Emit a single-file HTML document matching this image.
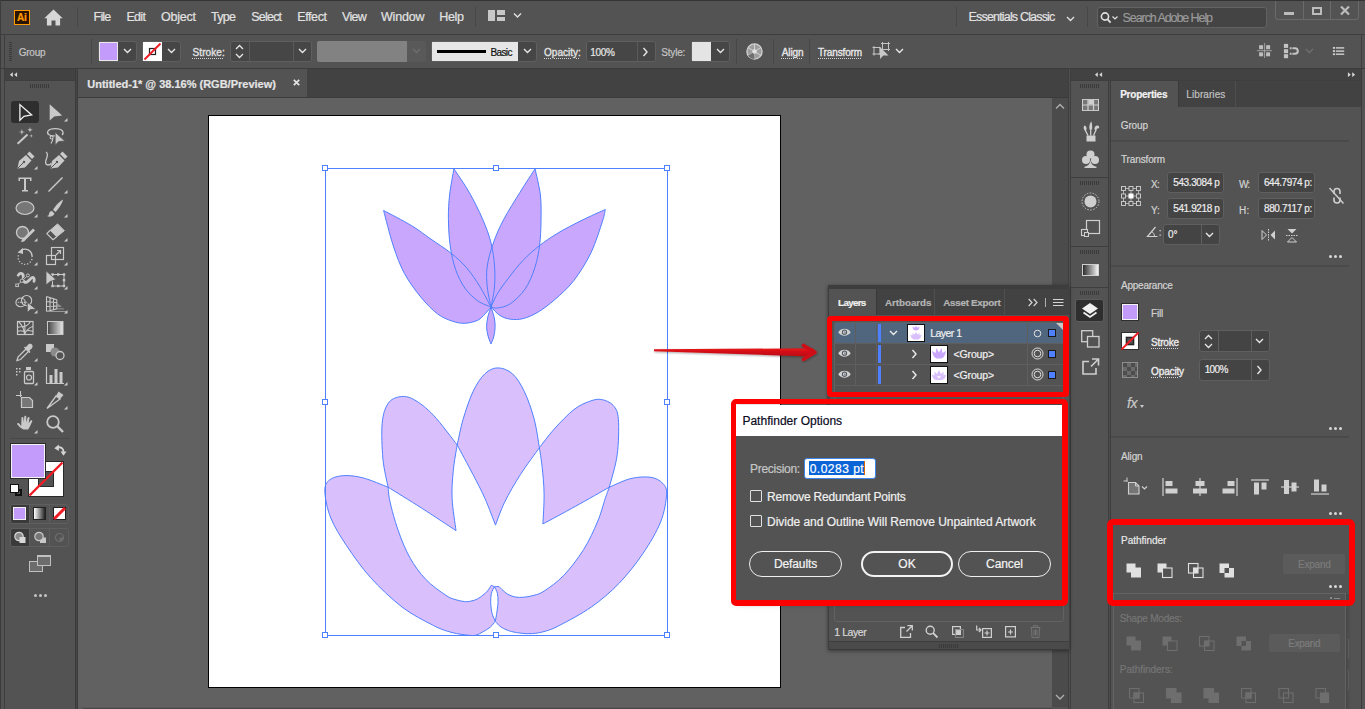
<!DOCTYPE html>
<html><head><meta charset="utf-8">
<style>
*{box-sizing:border-box;margin:0;padding:0}
html,body{width:1365px;height:709px;overflow:hidden;background:#535353}
body{font-family:"Liberation Sans",sans-serif;font-size:11px;color:#dcdcdc;position:relative}
.a{position:absolute}
.t{position:absolute;white-space:nowrap;line-height:1;-webkit-text-stroke:0.2px currentColor}
.mb{font-size:12.5px;color:#e2e2e2;top:11px;letter-spacing:-0.1px}
.box{position:absolute;background:#464646;border:1px solid #5f5f5f;border-radius:3px}
.sep{position:absolute;width:1px;background:#444}
.grip{position:absolute;height:5px;background:repeating-linear-gradient(90deg,#3a3a3a 0 1px,transparent 1px 2px)}
.dot{text-decoration:underline dotted;text-decoration-thickness:1px;text-underline-offset:1.5px;text-decoration-color:#d4d4d4}
.bd{-webkit-text-stroke:0.35px currentColor}
svg{position:absolute;overflow:visible}
</style></head><body>

<!-- ===== window edges ===== -->
<div class="a" style="left:0;top:0;width:1365px;height:1px;background:#343434"></div>
<div class="a" style="left:0;top:0;width:1px;height:709px;background:#3c3c3c"></div>

<!-- ===== MENU BAR ===== -->
<div id="menubar" class="a" style="left:1px;top:1px;width:1364px;height:33px;background:#535353"></div>
<!-- Ai logo -->
<div class="a" style="left:14px;top:10px;width:16px;height:15px;background:#2b1400;border:1px solid #ff9a00"></div>
<div class="t" style="left:17px;top:13px;font-size:10px;font-weight:bold;color:#ff9a00;letter-spacing:-0.2px">Ai</div>
<!-- home -->
<svg style="left:44px;top:9px" width="19" height="17" viewBox="0 0 19 17"><path d="M9.5 0.5L0.3 9.2h2.6v7.3h4.6v-5h4v5h4.6V9.2h2.6z" fill="#d6d6d6"/></svg>
<div class="sep" style="left:77px;top:7px;height:20px;background:#474747"></div>
<div class="t mb" style="left:93.6px;letter-spacing:-0.82px;">File</div>
<div class="t mb" style="left:126.4px;letter-spacing:-0.68px;">Edit</div>
<div class="t mb" style="left:161.0px;letter-spacing:-0.25px;">Object</div>
<div class="t mb" style="left:211.0px;letter-spacing:-0.74px;">Type</div>
<div class="t mb" style="left:251.3px;letter-spacing:-0.79px;">Select</div>
<div class="t mb" style="left:297.3px;letter-spacing:-0.41px;">Effect</div>
<div class="t mb" style="left:342.1px;letter-spacing:-0.76px;">View</div>
<div class="t mb" style="left:381.0px;letter-spacing:-0.21px;">Window</div>
<div class="t mb" style="left:439.3px;letter-spacing:-0.37px;">Help</div>
<div class="sep" style="left:475px;top:7px;height:20px;background:#474747"></div>
<!-- workspace layout icon -->
<svg style="left:488px;top:10px" width="36" height="12" viewBox="0 0 36 12"><rect x="0" y="0" width="7" height="11" fill="#c8c8c8"/><rect x="9" y="0" width="8" height="5" fill="#c8c8c8"/><rect x="9" y="7" width="8" height="4" fill="#c8c8c8"/><path d="M26 3.5l3.5 3.5 3.5-3.5" fill="none" stroke="#e0e0e0" stroke-width="1.4"/></svg>
<!-- right side -->
<div class="sep" style="left:956px;top:7px;height:20px;background:#474747"></div>
<div class="t" style="left:968.5px;top:11px;font-size:12.5px;color:#e2e2e2;letter-spacing:-0.82px;">Essentials Classic</div>
<svg style="left:1066px;top:16px" width="9" height="6" viewBox="0 0 9 6"><path d="M1 1l3.5 3.5L8 1" fill="none" stroke="#e0e0e0" stroke-width="1.4"/></svg>
<div class="sep" style="left:1087px;top:7px;height:20px;background:#474747"></div>
<div class="a" style="left:1097px;top:7px;width:170px;height:21px;background:#444;border:1px solid #626262;border-radius:3px"></div>
<svg style="left:1100px;top:11px" width="20" height="14" viewBox="0 0 20 14"><circle cx="5" cy="5.5" r="3.6" fill="none" stroke="#e0e0e0" stroke-width="1.6"/><path d="M7.6 8.4l3 3.2" stroke="#e0e0e0" stroke-width="1.8"/><path d="M12.5 5.5l2.5 2.5 2.5-2.5" fill="none" stroke="#e0e0e0" stroke-width="1.2"/></svg>
<div class="t" style="left:1122.6px;top:12px;font-size:12.5px;color:#9a9a9a;letter-spacing:-1.08px;">Search Adobe Help</div>
<!-- window controls -->
<div class="a" style="left:1275px;top:1px;width:84px;height:19px;border:1px solid #6a6a6a;border-top:none;border-radius:0 0 3px 3px"></div>
<div class="sep" style="left:1303px;top:1px;height:18px;background:#6a6a6a"></div>
<div class="sep" style="left:1330px;top:1px;height:18px;background:#6a6a6a"></div>
<div class="a" style="left:1284px;top:12px;width:10px;height:3px;background:#bcbcbc"></div>
<div class="a" style="left:1312px;top:7px;width:10px;height:8px;border:2px solid #bcbcbc"></div>
<svg style="left:1340px;top:6px" width="10" height="9" viewBox="0 0 10 9"><path d="M1 0.5l8 8M9 0.5l-8 8" stroke="#bcbcbc" stroke-width="2.2"/></svg>


<!-- ===== CONTROL BAR ===== -->
<div class="a" style="left:1px;top:34px;width:1364px;height:1px;background:#3e3e3e"></div>
<div class="a" style="left:4px;top:35px;width:1358px;height:33px;background:#535353;border-left:1px solid #3e3e3e;border-right:1px solid #3e3e3e"></div>
<div class="a" style="left:1px;top:68px;width:1364px;height:1px;background:#3c3c3c"></div>
<div class="grip" style="left:9px;top:42px;width:3px;height:19px;background:repeating-linear-gradient(180deg,#3a3a3a 0 1px,transparent 1px 2px)"></div>
<div class="t" style="left:18.7px;top:48px;font-size:10px;color:#c4c4c4;letter-spacing:-0.22px;">Group</div>
<div class="sep" style="left:91px;top:39px;height:25px;background:#474747"></div>
<!-- fill swatch -->
<div class="box" style="left:98px;top:41px;width:39px;height:21px"></div>
<div class="a" style="left:99px;top:42px;width:19px;height:19px;background:#c29bfb;border:1px solid #e8e8e8"></div>
<svg style="left:123px;top:48px" width="9" height="6" viewBox="0 0 9 6"><path d="M1 1l3.5 3.5L8 1" fill="none" stroke="#e6e6e6" stroke-width="1.4"/></svg>
<!-- stroke swatch -->
<div class="box" style="left:142px;top:41px;width:39px;height:21px"></div>
<div class="a" style="left:143px;top:42px;width:19px;height:19px;background:#fff"></div>
<svg style="left:143px;top:42px" width="19" height="19" viewBox="0 0 19 19"><rect x="6.5" y="6.5" width="6" height="6" fill="#fff" stroke="#222" stroke-width="1.2"/><path d="M1.5 17.5L17.5 1.5" stroke="#ee1c24" stroke-width="2"/></svg>
<svg style="left:167px;top:48px" width="9" height="6" viewBox="0 0 9 6"><path d="M1 1l3.5 3.5L8 1" fill="none" stroke="#e6e6e6" stroke-width="1.4"/></svg>
<div class="t" style="left:192.5px;top:48px;font-size:10px;color:#e0e0e0;letter-spacing:0.09px;"><span class="dot bd">Stroke:</span></div>
<!-- stroke weight -->
<div class="box" style="left:230px;top:41px;width:82px;height:21px"></div>
<div class="sep" style="left:249px;top:42px;height:19px;background:#5a5a5a"></div>
<div class="sep" style="left:293px;top:42px;height:19px;background:#5a5a5a"></div>
<svg style="left:235px;top:44px" width="9" height="15" viewBox="0 0 9 15"><path d="M1 5l3.5-3.5L8 5M1 10l3.5 3.5L8 10" fill="none" stroke="#e6e6e6" stroke-width="1.3"/></svg>
<svg style="left:298px;top:48px" width="9" height="6" viewBox="0 0 9 6"><path d="M1 1l3.5 3.5L8 1" fill="none" stroke="#e6e6e6" stroke-width="1.4"/></svg>
<!-- var width (disabled) -->
<div class="a" style="left:317px;top:41px;width:90px;height:21px;background:#828282;border-radius:2px 0 0 2px"></div>
<div class="a" style="left:407px;top:41px;width:19px;height:21px;background:#595959;border-radius:0 2px 2px 0"></div>
<svg style="left:412px;top:48px" width="9" height="6" viewBox="0 0 9 6"><path d="M1 1l3.5 3.5L8 1" fill="none" stroke="#6e6e6e" stroke-width="1.4"/></svg>
<!-- brush -->
<div class="box" style="left:431px;top:41px;width:106px;height:21px"></div>
<div class="a" style="left:432px;top:42px;width:86px;height:19px;background:#e6e6e6"></div>
<div class="a" style="left:437px;top:50px;width:49px;height:3px;background:#000"></div>
<div class="t" style="left:490.4px;top:48px;font-size:10px;color:#111;letter-spacing:-0.59px;">Basic</div>
<svg style="left:523px;top:48px" width="9" height="6" viewBox="0 0 9 6"><path d="M1 1l3.5 3.5L8 1" fill="none" stroke="#e6e6e6" stroke-width="1.4"/></svg>
<!-- opacity -->
<div class="t" style="left:544.0px;top:48px;font-size:10px;color:#e0e0e0;letter-spacing:0.02px;"><span class="dot bd">Opacity:</span></div>
<div class="box" style="left:586px;top:41px;width:70px;height:21px"></div>
<div class="sep" style="left:637px;top:42px;height:19px;background:#5a5a5a"></div>
<div class="t" style="left:590.3px;top:48px;font-size:10px;color:#e6e6e6;letter-spacing:-0.36px;">100%</div>
<svg style="left:642px;top:47px" width="7" height="10" viewBox="0 0 7 10"><path d="M1.5 1l3.5 4-3.5 4" fill="none" stroke="#e6e6e6" stroke-width="1.4"/></svg>
<div class="t" style="left:661.2px;top:48px;font-size:10px;color:#c4c4c4;letter-spacing:-0.16px;">Style:</div>
<div class="box" style="left:691px;top:41px;width:39px;height:21px"></div>
<div class="a" style="left:692px;top:42px;width:19px;height:19px;background:#e4e4e4"></div>
<svg style="left:716px;top:48px" width="9" height="6" viewBox="0 0 9 6"><path d="M1 1l3.5 3.5L8 1" fill="none" stroke="#e6e6e6" stroke-width="1.4"/></svg>
<div class="sep" style="left:736px;top:39px;height:25px;background:#474747"></div>
<!-- recolor -->
<svg style="left:746px;top:43px" width="17" height="17" viewBox="0 0 17 17"><circle cx="8.5" cy="8.5" r="7.6" fill="#9e9e9e" stroke="#d2d2d2" stroke-width="1.3"/><path d="M8.5 8.5L8.5 1M8.5 8.5L15 4.5M8.5 8.5L15 12.5M8.5 8.5V16M8.5 8.5L2 12.5M8.5 8.5L2 4.5" stroke="#d8d8d8" stroke-width="0.9"/><path d="M8.5 8.5L2 12.5A7.6 7.6 0 0 0 8.5 16z" fill="#707070"/><circle cx="8.5" cy="8.5" r="2.2" fill="#e2e2e2"/></svg>
<div class="sep" style="left:773px;top:39px;height:25px;background:#474747"></div>
<div class="t" style="left:781.8px;top:48px;font-size:10px;color:#e6e6e6;letter-spacing:-0.11px;"><span class="dot bd">Align</span></div>
<div class="sep" style="left:809px;top:39px;height:25px;background:#474747"></div>
<div class="t" style="left:818.0px;top:48px;font-size:10px;color:#e6e6e6;letter-spacing:-0.13px;"><span class="dot bd">Transform</span></div>
<!-- isolate icon -->
<svg style="left:873px;top:42px" width="32" height="19" viewBox="0 0 32 19"><g fill="none" stroke="#c4c4c4" stroke-width="1"><rect x="1" y="5.5" width="6" height="6.5"/><path d="M-0.5 5.5h2M-0.5 12h2M5.5 12h2.5M1 4v2M1 11.5v2"/><rect x="9.5" y="1.5" width="6" height="6"/><path d="M8 1.5h2M15 1.5h2M15 7.5h2M9.5 0v2M15.5 0v2M15.5 7v2M9.5 7v2"/></g><path d="M6.5 4.5L7.2 17L10.2 13.5L15.5 13.5Z" fill="#c8c8c8"/><path d="M23 7l3.5 3.5L30 7" fill="none" stroke="#e6e6e6" stroke-width="1.4"/></svg>
<!-- right icons -->
<svg style="left:1256px;top:42px" width="17" height="17" viewBox="0 0 17 17"><g fill="#bdbdbd"><rect x="3.1" y="3.2" width="4" height="4"/><rect x="10.1" y="3.2" width="4" height="4"/><rect x="3.1" y="10.3" width="4" height="4"/><rect x="10.1" y="10.3" width="4" height="4"/></g><path d="M8.6 1v15M0.9 8.7h15" stroke="#a8a8a8" stroke-width="0.9"/></svg>
<svg style="left:1283px;top:42px" width="32" height="17" viewBox="0 0 32 17"><g fill="#c4c4c4"><rect x="0.9" y="1.9" width="4.2" height="4"/><rect x="0.9" y="7.2" width="4.2" height="4"/><rect x="0.9" y="12.2" width="4.2" height="4"/></g><path d="M6.8 6.2h5.2a2.8 2.8 0 0 1 0 5.6h-5.2" fill="none" stroke="#c4c4c4" stroke-width="2"/><path d="M9 4.5v9" stroke="#535353" stroke-width="0.8"/><path d="M22.7 6.9l3.7 3.7 3.7-3.7" fill="none" stroke="#727272" stroke-width="1.2"/></svg>
<svg style="left:1332px;top:46px" width="13" height="10" viewBox="0 0 13 10"><g fill="#d0d0d0"><rect x="0.9" y="1" width="2.2" height="1.8"/><rect x="0.9" y="4.2" width="2.2" height="1.8"/><rect x="0.9" y="7.300" width="2.2" height="1.8"/><rect x="4" y="1.2" width="8.2" height="1.400"/><rect x="4" y="4.400" width="8.2" height="1.400"/><rect x="4" y="7.5" width="8.2" height="1.400"/></g></svg>


<!-- ===== TAB BAR + CANVAS ===== -->
<div class="a" style="left:78px;top:69px;width:991px;height:28px;background:#424242"></div>
<div class="a" style="left:78px;top:69px;width:229px;height:28px;background:#535353"></div>
<div class="a" style="left:78px;top:97px;width:991px;height:1px;background:#3b3b3b"></div>
<div id="canvas" class="a" style="left:78px;top:98px;width:974px;height:609px;background:#616161"></div>
<div class="a" style="left:1052px;top:98px;width:16px;height:609px;background:#4b4b4b"></div>
<div class="a" style="left:1068px;top:69px;width:1px;height:640px;background:#3e3e3e"></div><div class="a" style="left:1069px;top:69px;width:1px;height:640px;background:#505050"></div><div class="a" style="left:1070px;top:69px;width:1px;height:640px;background:#3e3e3e"></div>
<div class="a" style="left:75px;top:69px;width:3px;height:640px;background:#3b3b3b"></div><div class="a" style="left:76px;top:69px;width:1px;height:640px;background:#464646"></div>
<div class="a" style="left:208px;top:115px;width:573px;height:573px;background:#fff;border:1px solid #000"></div>
<svg class="a" style="left:0;top:0" width="1365" height="709" viewBox="0 0 1365 709">
<g fill="#c9a7fc" stroke="none"><path d="M453.9 168.8C453.2 173.2 450.5 186.8 449.6 195.0C448.7 203.2 448.3 209.8 448.4 218.3C448.5 226.8 449.0 237.3 450.2 245.9C451.4 254.5 453.2 262.7 455.7 269.7C458.1 276.7 461.2 282.9 464.9 288.1C468.6 293.3 473.4 297.8 477.8 300.9C482.2 304.0 488.8 306.0 491.0 307.0C491.6 303.8 493.8 294.6 494.4 288.0C495.0 281.4 495.1 274.7 494.6 267.2C494.1 259.7 493.1 251.1 491.1 243.1C489.1 235.0 486.2 227.4 482.5 218.9C478.9 210.5 473.9 200.5 469.1 192.2C464.4 183.8 456.4 172.7 453.9 168.8Z"/><path d="M535.1 168.8C535.9 173.2 539.4 186.3 540.4 195.0C541.4 203.7 541.1 212.6 541.0 221.0C540.9 229.4 540.6 237.7 539.6 245.5C538.6 253.3 537.2 260.6 534.8 267.8C532.4 275.0 529.3 282.9 525.2 288.9C521.1 294.9 515.0 300.5 510.4 303.7C505.8 306.9 500.9 307.4 497.7 308.0C494.5 308.6 492.1 307.2 491.0 307.0C490.4 303.8 488.1 294.6 487.4 288.0C486.7 281.4 486.1 274.7 487.1 267.2C488.1 259.7 490.4 251.1 493.3 243.1C496.1 235.0 499.5 227.4 504.0 218.9C508.4 210.5 514.9 200.5 520.1 192.2C525.2 183.8 532.6 172.7 535.1 168.8Z"/><path d="M383.6 210.5C388.3 213.0 404.0 221.0 411.7 225.7C419.4 230.4 423.4 233.9 430.0 238.5C436.6 243.1 445.0 248.3 451.1 253.2C457.2 258.1 461.9 262.4 466.7 267.9C471.4 273.4 475.6 279.7 479.6 286.2C483.7 292.7 489.1 303.5 491.0 307.0C490.0 308.1 487.3 311.6 485.1 313.8C482.9 316.0 481.2 318.6 477.8 320.2C474.4 321.8 469.2 323.1 464.9 323.3C460.6 323.5 456.7 322.7 452.1 321.1C447.5 319.5 442.6 317.8 437.4 313.8C432.2 309.8 426.4 303.9 420.9 297.2C415.4 290.5 409.0 281.9 404.4 273.4C399.8 264.8 396.8 256.4 393.3 245.9C389.8 235.4 385.2 216.4 383.6 210.5Z"/><path d="M605.3 209.5C602.2 210.9 592.5 215.2 586.6 218.0C580.7 220.8 575.0 223.7 569.7 226.5C564.4 229.3 559.9 231.7 554.9 234.9C549.9 238.1 544.9 241.3 539.6 245.5C534.3 249.7 528.3 254.8 523.1 260.3C517.9 265.8 512.5 272.8 508.3 278.3C504.1 283.8 500.6 288.4 497.7 293.2C494.8 298.0 492.1 304.7 491.0 307.0C492.5 308.4 496.6 313.4 499.8 315.4C503.0 317.4 506.5 318.7 510.4 319.2C514.3 319.7 518.5 319.8 523.1 318.6C527.7 317.4 532.6 315.4 537.9 312.2C543.2 309.0 548.9 304.8 554.9 299.5C560.9 294.2 567.9 288.3 573.9 280.5C579.9 272.7 586.1 262.8 590.9 252.9C595.7 243.0 600.1 228.4 602.5 221.2C604.9 214.0 604.8 211.4 605.3 209.5Z"/><path d="M491.0 307.0C490.4 308.8 488.3 314.6 487.6 318.0C486.9 321.4 486.5 324.4 486.6 327.5C486.7 330.6 487.6 334.1 488.3 336.9C489.0 339.6 490.6 342.8 491.0 344.0C491.4 342.8 493.0 339.6 493.7 336.9C494.4 334.1 495.0 330.6 495.1 327.5C495.2 324.4 495.0 321.4 494.3 318.0C493.6 314.6 491.6 308.8 491.0 307.0Z"/></g>
<g fill="#d9c0fc" stroke="none"><path d="M457.2 444.9C458.2 440.7 460.5 428.1 463.1 419.3C465.8 410.4 469.4 399.2 473.0 391.6C476.6 384.0 480.7 377.8 484.9 373.8C489.0 369.9 493.3 367.9 497.9 367.9C502.5 367.9 508.1 369.9 512.5 373.8C516.9 377.8 520.7 384.0 524.4 391.6C528.0 399.2 531.7 409.9 534.2 419.3C536.7 428.6 538.5 443.0 539.4 447.7C536.2 452.2 526.2 465.5 520.4 474.6C514.6 483.6 508.8 493.8 504.6 502.2C500.5 510.6 497.0 521.3 495.5 525.1C493.7 520.6 488.6 506.7 484.9 498.3C481.1 489.8 477.6 483.4 473.0 474.6C468.4 465.7 459.8 449.9 457.2 444.9Z"/><path d="M457.2 444.9C453.3 440.0 440.7 422.9 433.5 415.3C426.3 407.7 419.4 402.6 413.8 399.5C408.2 396.4 404.2 396.1 399.9 396.7C395.7 397.4 391.0 399.0 388.1 403.5C385.1 407.9 383.0 414.0 382.2 423.2C381.3 432.4 382.0 448.1 382.9 458.8C383.9 469.4 387.2 482.5 388.1 487.2C393.7 490.7 410.3 500.9 421.7 508.1C433.0 515.4 450.3 526.9 456.0 530.6C455.4 525.3 452.5 508.3 452.1 498.3C451.6 488.3 452.4 479.5 453.3 470.6C454.1 461.7 456.5 449.2 457.2 444.9Z"/><path d="M539.4 447.7C541.8 444.6 548.4 435.5 554.2 429.1C560.0 422.7 568.1 414.1 574.0 409.5C579.9 404.9 585.1 403.0 589.7 401.3C594.3 399.6 597.5 398.8 601.4 399.5C605.3 400.2 610.4 402.1 613.2 405.4C616.1 408.7 617.7 411.0 618.4 419.3C619.0 427.5 618.7 443.5 617.2 454.8C615.7 466.1 610.6 481.8 609.3 487.2C603.7 490.4 586.8 500.0 575.7 506.2C564.7 512.3 548.4 521.0 542.9 523.9C543.1 519.0 544.2 503.9 544.1 494.3C544.0 484.8 542.9 474.4 542.1 466.7C541.3 458.9 539.8 450.9 539.4 447.7Z"/><path d="M388.1 487.2C383.8 485.6 370.0 479.6 362.4 477.7C354.8 475.8 348.2 475.3 342.7 475.7C337.1 476.2 331.8 477.7 328.8 480.5C325.9 483.2 324.5 486.1 324.9 492.3C325.2 498.6 327.2 509.1 330.8 518.0C334.4 526.9 340.0 535.8 346.6 545.7C353.2 555.5 361.1 567.1 370.3 577.3C379.5 587.5 391.4 598.8 401.9 606.9C412.4 614.9 425.2 621.2 433.5 625.5C441.8 629.8 446.1 630.9 452.0 632.5C457.9 634.1 464.9 634.9 469.0 635.3C473.1 635.7 474.2 635.6 476.5 635.0C478.8 634.4 480.6 633.1 482.9 631.8C485.2 630.5 488.1 629.0 490.2 627.2C492.3 625.5 494.4 622.3 495.3 621.3C494.8 620.0 492.9 616.6 492.1 613.5C491.3 610.4 490.8 605.9 490.7 602.5C490.6 599.1 490.8 595.9 491.4 593.3C492.0 590.7 493.9 587.8 494.4 586.7C493.9 586.5 491.7 585.5 491.2 585.3C490.6 586.2 488.9 589.4 487.5 591.0C486.1 592.6 484.6 593.9 482.9 595.2C481.2 596.5 479.4 598.0 477.4 599.0C475.4 600.0 473.1 600.7 471.0 601.1C468.9 601.5 467.3 601.9 464.6 601.6C461.9 601.3 458.2 600.6 455.0 599.5C451.8 598.4 450.3 598.4 445.4 595.0C440.5 591.7 431.5 585.5 425.6 579.2C419.7 573.0 414.4 565.7 409.8 557.5C405.2 549.3 401.2 539.1 398.0 529.9C394.7 520.6 391.7 509.3 390.1 502.2C388.4 495.1 388.4 489.7 388.1 487.2Z"/><path d="M609.3 487.2C612.9 485.7 624.1 480.2 631.0 478.5C637.9 476.9 645.5 476.5 650.8 477.3C656.0 478.1 660.0 480.4 662.6 483.2C665.3 486.1 666.9 487.9 666.6 494.3C666.2 500.8 664.6 512.1 660.6 522.0C656.7 531.8 649.8 543.4 642.9 553.6C636.0 563.8 627.7 574.3 619.2 583.2C610.6 592.1 601.4 599.9 591.5 606.9C581.6 613.9 567.7 621.1 559.9 625.2C552.1 629.3 549.6 629.9 545.0 631.3C540.4 632.7 536.1 633.3 532.3 633.6C528.5 633.9 525.5 633.6 522.0 633.3C518.5 632.9 514.8 632.5 511.3 631.5C507.8 630.5 503.9 628.9 501.2 627.2C498.5 625.5 496.3 622.3 495.3 621.3C495.5 620.0 496.2 616.6 496.7 613.5C497.1 610.4 497.9 605.9 498.0 602.5C498.1 599.1 498.0 595.9 497.4 593.3C496.8 590.7 494.9 587.8 494.4 586.7C495.2 586.7 498.2 586.5 499.0 586.5C499.7 587.2 501.7 589.3 503.1 590.6C504.6 591.9 505.7 593.1 507.7 594.2C509.7 595.3 512.2 596.5 515.0 597.0C517.8 597.5 521.0 597.5 524.2 597.2C527.4 596.9 530.7 596.3 534.0 595.3C537.3 594.3 539.1 594.4 544.1 591.1C549.1 587.8 557.3 582.2 563.9 575.3C570.4 568.4 578.0 558.5 583.6 549.6C589.2 540.7 593.8 530.5 597.4 522.0C601.1 513.4 603.4 504.1 605.3 498.3C607.3 492.5 608.6 489.0 609.3 487.2Z"/></g>
<g fill="none" stroke="#4f80ff" stroke-width="1" stroke-linejoin="round"><path d="M453.9 168.8C453.2 173.2 450.5 186.8 449.6 195.0C448.7 203.2 448.3 209.8 448.4 218.3C448.5 226.8 449.0 237.3 450.2 245.9C451.4 254.5 453.2 262.7 455.7 269.7C458.1 276.7 461.2 282.9 464.9 288.1C468.6 293.3 473.4 297.8 477.8 300.9C482.2 304.0 488.8 306.0 491.0 307.0C491.6 303.8 493.8 294.6 494.4 288.0C495.0 281.4 495.1 274.7 494.6 267.2C494.1 259.7 493.1 251.1 491.1 243.1C489.1 235.0 486.2 227.4 482.5 218.9C478.9 210.5 473.9 200.5 469.1 192.2C464.4 183.8 456.4 172.7 453.9 168.8Z"/><path d="M535.1 168.8C535.9 173.2 539.4 186.3 540.4 195.0C541.4 203.7 541.1 212.6 541.0 221.0C540.9 229.4 540.6 237.7 539.6 245.5C538.6 253.3 537.2 260.6 534.8 267.8C532.4 275.0 529.3 282.9 525.2 288.9C521.1 294.9 515.0 300.5 510.4 303.7C505.8 306.9 500.9 307.4 497.7 308.0C494.5 308.6 492.1 307.2 491.0 307.0C490.4 303.8 488.1 294.6 487.4 288.0C486.7 281.4 486.1 274.7 487.1 267.2C488.1 259.7 490.4 251.1 493.3 243.1C496.1 235.0 499.5 227.4 504.0 218.9C508.4 210.5 514.9 200.5 520.1 192.2C525.2 183.8 532.6 172.7 535.1 168.8Z"/><path d="M383.6 210.5C388.3 213.0 404.0 221.0 411.7 225.7C419.4 230.4 423.4 233.9 430.0 238.5C436.6 243.1 445.0 248.3 451.1 253.2C457.2 258.1 461.9 262.4 466.7 267.9C471.4 273.4 475.6 279.7 479.6 286.2C483.7 292.7 489.1 303.5 491.0 307.0C490.0 308.1 487.3 311.6 485.1 313.8C482.9 316.0 481.2 318.6 477.8 320.2C474.4 321.8 469.2 323.1 464.9 323.3C460.6 323.5 456.7 322.7 452.1 321.1C447.5 319.5 442.6 317.8 437.4 313.8C432.2 309.8 426.4 303.9 420.9 297.2C415.4 290.5 409.0 281.9 404.4 273.4C399.8 264.8 396.8 256.4 393.3 245.9C389.8 235.4 385.2 216.4 383.6 210.5Z"/><path d="M605.3 209.5C602.2 210.9 592.5 215.2 586.6 218.0C580.7 220.8 575.0 223.7 569.7 226.5C564.4 229.3 559.9 231.7 554.9 234.9C549.9 238.1 544.9 241.3 539.6 245.5C534.3 249.7 528.3 254.8 523.1 260.3C517.9 265.8 512.5 272.8 508.3 278.3C504.1 283.8 500.6 288.4 497.7 293.2C494.8 298.0 492.1 304.7 491.0 307.0C492.5 308.4 496.6 313.4 499.8 315.4C503.0 317.4 506.5 318.7 510.4 319.2C514.3 319.7 518.5 319.8 523.1 318.6C527.7 317.4 532.6 315.4 537.9 312.2C543.2 309.0 548.9 304.8 554.9 299.5C560.9 294.2 567.9 288.3 573.9 280.5C579.9 272.7 586.1 262.8 590.9 252.9C595.7 243.0 600.1 228.4 602.5 221.2C604.9 214.0 604.8 211.4 605.3 209.5Z"/><path d="M491.0 307.0C490.4 308.8 488.3 314.6 487.6 318.0C486.9 321.4 486.5 324.4 486.6 327.5C486.7 330.6 487.6 334.1 488.3 336.9C489.0 339.6 490.6 342.8 491.0 344.0C491.4 342.8 493.0 339.6 493.7 336.9C494.4 334.1 495.0 330.6 495.1 327.5C495.2 324.4 495.0 321.4 494.3 318.0C493.6 314.6 491.6 308.8 491.0 307.0Z"/><path d="M457.2 444.9C458.2 440.7 460.5 428.1 463.1 419.3C465.8 410.4 469.4 399.2 473.0 391.6C476.6 384.0 480.7 377.8 484.9 373.8C489.0 369.9 493.3 367.9 497.9 367.9C502.5 367.9 508.1 369.9 512.5 373.8C516.9 377.8 520.7 384.0 524.4 391.6C528.0 399.2 531.7 409.9 534.2 419.3C536.7 428.6 538.5 443.0 539.4 447.7C536.2 452.2 526.2 465.5 520.4 474.6C514.6 483.6 508.8 493.8 504.6 502.2C500.5 510.6 497.0 521.3 495.5 525.1C493.7 520.6 488.6 506.7 484.9 498.3C481.1 489.8 477.6 483.4 473.0 474.6C468.4 465.7 459.8 449.9 457.2 444.9Z"/><path d="M457.2 444.9C453.3 440.0 440.7 422.9 433.5 415.3C426.3 407.7 419.4 402.6 413.8 399.5C408.2 396.4 404.2 396.1 399.9 396.7C395.7 397.4 391.0 399.0 388.1 403.5C385.1 407.9 383.0 414.0 382.2 423.2C381.3 432.4 382.0 448.1 382.9 458.8C383.9 469.4 387.2 482.5 388.1 487.2C393.7 490.7 410.3 500.9 421.7 508.1C433.0 515.4 450.3 526.9 456.0 530.6C455.4 525.3 452.5 508.3 452.1 498.3C451.6 488.3 452.4 479.5 453.3 470.6C454.1 461.7 456.5 449.2 457.2 444.9Z"/><path d="M539.4 447.7C541.8 444.6 548.4 435.5 554.2 429.1C560.0 422.7 568.1 414.1 574.0 409.5C579.9 404.9 585.1 403.0 589.7 401.3C594.3 399.6 597.5 398.8 601.4 399.5C605.3 400.2 610.4 402.1 613.2 405.4C616.1 408.7 617.7 411.0 618.4 419.3C619.0 427.5 618.7 443.5 617.2 454.8C615.7 466.1 610.6 481.8 609.3 487.2C603.7 490.4 586.8 500.0 575.7 506.2C564.7 512.3 548.4 521.0 542.9 523.9C543.1 519.0 544.2 503.9 544.1 494.3C544.0 484.8 542.9 474.4 542.1 466.7C541.3 458.9 539.8 450.9 539.4 447.7Z"/><path d="M388.1 487.2C383.8 485.6 370.0 479.6 362.4 477.7C354.8 475.8 348.2 475.3 342.7 475.7C337.1 476.2 331.8 477.7 328.8 480.5C325.9 483.2 324.5 486.1 324.9 492.3C325.2 498.6 327.2 509.1 330.8 518.0C334.4 526.9 340.0 535.8 346.6 545.7C353.2 555.5 361.1 567.1 370.3 577.3C379.5 587.5 391.4 598.8 401.9 606.9C412.4 614.9 425.2 621.2 433.5 625.5C441.8 629.8 446.1 630.9 452.0 632.5C457.9 634.1 464.9 634.9 469.0 635.3C473.1 635.7 474.2 635.6 476.5 635.0C478.8 634.4 480.6 633.1 482.9 631.8C485.2 630.5 488.1 629.0 490.2 627.2C492.3 625.5 494.4 622.3 495.3 621.3C494.8 620.0 492.9 616.6 492.1 613.5C491.3 610.4 490.8 605.9 490.7 602.5C490.6 599.1 490.8 595.9 491.4 593.3C492.0 590.7 493.9 587.8 494.4 586.7C493.9 586.5 491.7 585.5 491.2 585.3C490.6 586.2 488.9 589.4 487.5 591.0C486.1 592.6 484.6 593.9 482.9 595.2C481.2 596.5 479.4 598.0 477.4 599.0C475.4 600.0 473.1 600.7 471.0 601.1C468.9 601.5 467.3 601.9 464.6 601.6C461.9 601.3 458.2 600.6 455.0 599.5C451.8 598.4 450.3 598.4 445.4 595.0C440.5 591.7 431.5 585.5 425.6 579.2C419.7 573.0 414.4 565.7 409.8 557.5C405.2 549.3 401.2 539.1 398.0 529.9C394.7 520.6 391.7 509.3 390.1 502.2C388.4 495.1 388.4 489.7 388.1 487.2Z"/><path d="M609.3 487.2C612.9 485.7 624.1 480.2 631.0 478.5C637.9 476.9 645.5 476.5 650.8 477.3C656.0 478.1 660.0 480.4 662.6 483.2C665.3 486.1 666.9 487.9 666.6 494.3C666.2 500.8 664.6 512.1 660.6 522.0C656.7 531.8 649.8 543.4 642.9 553.6C636.0 563.8 627.7 574.3 619.2 583.2C610.6 592.1 601.4 599.9 591.5 606.9C581.6 613.9 567.7 621.1 559.9 625.2C552.1 629.3 549.6 629.9 545.0 631.3C540.4 632.7 536.1 633.3 532.3 633.6C528.5 633.9 525.5 633.6 522.0 633.3C518.5 632.9 514.8 632.5 511.3 631.5C507.8 630.5 503.9 628.9 501.2 627.2C498.5 625.5 496.3 622.3 495.3 621.3C495.5 620.0 496.2 616.6 496.7 613.5C497.1 610.4 497.9 605.9 498.0 602.5C498.1 599.1 498.0 595.9 497.4 593.3C496.8 590.7 494.9 587.8 494.4 586.7C495.2 586.7 498.2 586.5 499.0 586.5C499.7 587.2 501.7 589.3 503.1 590.6C504.6 591.9 505.7 593.1 507.7 594.2C509.7 595.3 512.2 596.5 515.0 597.0C517.8 597.5 521.0 597.5 524.2 597.2C527.4 596.9 530.7 596.3 534.0 595.3C537.3 594.3 539.1 594.4 544.1 591.1C549.1 587.8 557.3 582.2 563.9 575.3C570.4 568.4 578.0 558.5 583.6 549.6C589.2 540.7 593.8 530.5 597.4 522.0C601.1 513.4 603.4 504.1 605.3 498.3C607.3 492.5 608.6 489.0 609.3 487.2Z"/></g>
<rect x="325.5" y="168.5" width="342" height="467" fill="none" stroke="#4f80ff" stroke-width="1"/>
<g fill="#fff" stroke="#4f80ff" stroke-width="1">
<rect x="322.5" y="165.5" width="5" height="5"/><rect x="493.5" y="165.5" width="5" height="5"/><rect x="664.5" y="165.5" width="5" height="5"/>
<rect x="322.5" y="399.5" width="5" height="5"/><rect x="664.5" y="399.5" width="5" height="5"/>
<rect x="322.5" y="632.5" width="5" height="5"/><rect x="493.5" y="632.5" width="5" height="5"/><rect x="664.5" y="632.5" width="5" height="5"/>
</g>
</svg>
<!-- scroll arrows -->
<svg class="a" style="left:1052px;top:98px" width="16" height="609" viewBox="0 0 16 609"><path d="M4 10.5l4-4 4 4M4 597l4 4 4-4" fill="none" stroke="#b0b0b0" stroke-width="1.3"/></svg>
<!-- TAB -->
<div class="t" style="left:87.3px;top:79px;font-size:11px;font-weight:bold;color:#e4e4e4;letter-spacing:-0.00px;">Untitled-1* @ 38.16% (RGB/Preview)</div>
<svg style="left:293px;top:79px" width="7" height="7" viewBox="0 0 7 7"><path d="M0.8 0.8l5.4 5.4M6.2 0.8L0.8 6.2" stroke="#e4e4e4" stroke-width="1.7"/></svg>

<!-- bottom strip --><div class="a" style="left:78px;top:707px;width:974px;height:1px;background:#5a5a5a"></div><div class="a" style="left:83px;top:708px;width:969px;height:1px;background:#474747"></div><div class="a" style="left:78px;top:708px;width:5px;height:1px;background:#5e5e5e"></div>

<!-- ===== LEFT TOOLBAR ===== -->
<div class="a" style="left:5px;top:69px;width:70px;height:11px;background:#424242"></div><div class="a" style="left:5px;top:80px;width:70px;height:1px;background:#3e3e3e"></div>
<div class="a" style="left:4px;top:69px;width:1px;height:640px;background:#3e3e3e"></div><div class="a" style="left:5px;top:81px;width:70px;height:628px;background:#535353"></div>
<svg class="a" style="left:9px;top:72px" width="9" height="5.4" viewBox="0 0 10 6"><path d="M4.2 0.3L1 3l3.2 2.7zM9 0.3L5.8 3L9 5.7z" fill="#dadada"/></svg>
<div class="grip" style="left:30px;top:84px;width:20px;height:4px"></div>
<div class="a" style="left:11px;top:101px;width:28px;height:22px;background:#2e2e2e;border-radius:3px"></div>
<svg style="left:13px;top:100px" width="24" height="24" viewBox="0 0 24 24"><path d="M6.9 4.6V20.2L10.9 16.3L18.6 14.9Z" fill="none" stroke="#f2f2f2" stroke-width="1.3" stroke-linejoin="miter"/></svg>
<svg style="left:43px;top:100px" width="24" height="24" viewBox="0 0 24 24"><path d="M6.7 4.2V20.6L11.2 16.4L19.2 15.5Z" fill="#c9c9c9"/><path d="M24.5 18V21.5H21Z" fill="#c9c9c9"/></svg>
<svg style="left:13px;top:124px" width="24" height="24" viewBox="0 0 24 24"><path d="M4.6 19.8L14.5 10.4" stroke="#c9c9c9" stroke-width="2"/><path d="M8.9 4.8L9.5 7.4L12.1 8.0L9.5 8.6L8.9 11.2L8.3 8.6L5.7 8.0L8.3 7.4ZM17.0 3.0L17.6 5.2L19.8 5.8L17.6 6.4L17.0 8.6L16.4 6.4L14.2 5.8L16.4 5.2ZM18.2 10.0L18.6 11.5L20.1 11.9L18.6 12.3L18.2 13.8L17.8 12.3L16.3 11.9L17.8 11.5Z" fill="#c9c9c9"/></svg>
<svg style="left:43px;top:124px" width="24" height="24" viewBox="0 0 24 24"><path d="M12 11.8C6 12.5 3.5 9.5 5 7C7 4 17 3.5 19.5 7C20.5 8.5 20 10 19 11" fill="none" stroke="#c9c9c9" stroke-width="1.3"/><circle cx="8.6" cy="13.5" r="1.5" fill="none" stroke="#c9c9c9" stroke-width="1.1"/><path d="M9.5 14.8C10.5 16.5 8.5 17.5 8 19.5" fill="none" stroke="#c9c9c9" stroke-width="1.2"/><path d="M12.2 8.3V21.2L15.6 17.6L21.8 17Z" fill="#c9c9c9" stroke="#535353" stroke-width="0.7"/></svg>
<svg style="left:13px;top:148px" width="24" height="24" viewBox="0 0 24 24"><path d="M4.5 20.5L6 13L13 7L18.5 12.5L12 19.5Z" fill="#c9c9c9"/><path d="M5 20L10.5 14.5" stroke="#535353" stroke-width="1"/><circle cx="11" cy="14" r="1.2" fill="#535353"/><path d="M14 6L16.5 3.5L21.5 8.5L19 11Z" fill="#c9c9c9"/><path d="M24.5 18V21.5H21Z" fill="#c9c9c9"/></svg>
<svg style="left:43px;top:148px" width="24" height="24" viewBox="0 0 24 24"><g transform="translate(3,0)"><path d="M4.5 20.5L6 13L13 7L18.5 12.5L12 19.5Z" fill="#c9c9c9"/><path d="M5 20L10.5 14.5" stroke="#535353" stroke-width="1"/><circle cx="11" cy="14" r="1.2" fill="#535353"/><path d="M14 6L16.5 3.5L21.5 8.5L19 11Z" fill="#c9c9c9"/></g><path d="M3 4c3 2 1 5 0 8c-1 3 0 5 2 5c2 0 3-1 3-2" fill="none" stroke="#c9c9c9" stroke-width="1.3"/></svg>
<svg style="left:13px;top:172px" width="24" height="24" viewBox="0 0 24 24"><path d="M5.5 5.5h13v3.5h-1.5v-2h-4v11h2v1.5h-6v-1.5h2v-11h-4v2h-1.5z" fill="#c9c9c9"/><path d="M24.5 18V21.5H21Z" fill="#c9c9c9"/></svg>
<svg style="left:43px;top:172px" width="24" height="24" viewBox="0 0 24 24"><path d="M5.5 19.5L19.5 5.5" stroke="#c9c9c9" stroke-width="1.5"/><path d="M24.5 18V21.5H21Z" fill="#c9c9c9"/></svg>
<svg style="left:13px;top:196px" width="24" height="24" viewBox="0 0 24 24"><ellipse cx="12" cy="12" rx="9" ry="6.5" fill="#777" stroke="#c9c9c9" stroke-width="1.2"/><path d="M24.5 18V21.5H21Z" fill="#c9c9c9"/></svg>
<svg style="left:43px;top:196px" width="24" height="24" viewBox="0 0 24 24"><path d="M20 3.5C17 5 12 10 10 14L12.5 16C15.5 13 19.5 7 20 3.5Z" fill="#c9c9c9"/><path d="M9 15c-2 0-3 1.5-3 3c0 1-1 2-2 2c2 1.5 6 1 7.5-2.5z" fill="#c9c9c9"/><path d="M24.5 18V21.5H21Z" fill="#c9c9c9"/></svg>
<svg style="left:13px;top:220px" width="24" height="24" viewBox="0 0 24 24"><circle cx="9.5" cy="12.5" r="6" fill="#777" stroke="#c9c9c9" stroke-width="1.3"/><path d="M9 19.5L20 8.5L22 10.5L11 21.5L8 22Z" fill="#c9c9c9"/><path d="M24.5 18V21.5H21Z" fill="#c9c9c9"/></svg>
<svg style="left:43px;top:220px" width="24" height="24" viewBox="0 0 24 24"><path d="M7.2 10.3L14.6 3.9L21.3 10.7L13.7 16.8Z" fill="#c9c9c9" stroke="#c9c9c9" stroke-width="1" stroke-linejoin="round"/><path d="M7.2 10.3L3.8 13.6L10 19.7L13.7 16.8" fill="none" stroke="#c9c9c9" stroke-width="1.2" stroke-linejoin="round"/><path d="M24.5 18V21.5H21Z" fill="#c9c9c9"/></svg>
<svg style="left:13px;top:244px" width="24" height="24" viewBox="0 0 24 24"><path d="M8 6.5A7 7 0 0 1 19 12" fill="none" stroke="#c9c9c9" stroke-width="1.4"/><path d="M19 12A7 7 0 1 1 6 10" fill="none" stroke="#c9c9c9" stroke-width="1.3" stroke-dasharray="1.2 1.8"/><path d="M4.5 8.5L10 4V10Z" fill="#c9c9c9"/><path d="M24.5 18V21.5H21Z" fill="#c9c9c9"/></svg>
<svg style="left:43px;top:244px" width="24" height="24" viewBox="0 0 24 24"><rect x="3.5" y="11.5" width="9" height="9" fill="none" stroke="#c9c9c9" stroke-width="1.2"/><rect x="8.5" y="3.5" width="12" height="12" fill="none" stroke="#c9c9c9" stroke-width="1.2"/><path d="M13 11L17.5 6.5M14 6.5h3.5V10" fill="none" stroke="#c9c9c9" stroke-width="1.2"/><path d="M24.5 18V21.5H21Z" fill="#c9c9c9"/></svg>
<svg style="left:13px;top:268px" width="24" height="24" viewBox="0 0 24 24"><path d="M5.2 7.2C7.5 4 10.8 5.5 10.3 9.5C9.8 13.5 12 15.8 15 13.2C17.5 11 19.3 8.3 20.8 10C21.6 11.2 21.2 12.6 21 13.3" fill="none" stroke="#c9c9c9" stroke-width="2.8" stroke-linecap="round"/><path d="M4.1 17.3L14.8 7.6" stroke="#535353" stroke-width="2"/><path d="M4.1 17.3L14.8 7.6" stroke="#c9c9c9" stroke-width="0.9"/><rect x="2.8" y="16" width="2.6" height="2.6" fill="#535353" stroke="#c9c9c9" stroke-width="0.9"/><circle cx="8.9" cy="12.7" r="1.7" fill="#535353" stroke="#c9c9c9" stroke-width="0.9"/><circle cx="14.9" cy="7.4" r="1.5" fill="#535353" stroke="#c9c9c9" stroke-width="0.9"/><path d="M24.5 18V21.5H21Z" fill="#c9c9c9"/></svg>
<svg style="left:43px;top:268px" width="24" height="24" viewBox="0 0 24 24"><rect x="9.5" y="6.5" width="11.5" height="11.5" fill="none" stroke="#c9c9c9" stroke-width="1"/><g fill="#c9c9c9"><rect x="8.3" y="5.3" width="2.4" height="2.4"/><rect x="14" y="5.3" width="2.4" height="2.4"/><rect x="19.8" y="5.3" width="2.4" height="2.4"/><rect x="19.8" y="11" width="2.4" height="2.4"/><rect x="8.3" y="16.8" width="2.4" height="2.4"/><rect x="14" y="16.8" width="2.4" height="2.4"/><rect x="19.8" y="16.8" width="2.4" height="2.4"/></g><path d="M3 2.8V17L7.3 13.5L13 11.5Z" fill="#c9c9c9" stroke="#535353" stroke-width="0.8"/><path d="M24.5 18V21.5H21Z" fill="#c9c9c9"/></svg>
<svg style="left:13px;top:292px" width="24" height="24" viewBox="0 0 24 24"><ellipse cx="7.6" cy="10.4" rx="4.7" ry="4.4" fill="none" stroke="#c9c9c9" stroke-width="1.1"/><circle cx="13.6" cy="8.6" r="5.1" fill="none" stroke="#c9c9c9" stroke-width="1.1"/><path d="M4.8 10.4h9.5" stroke="#c9c9c9" stroke-width="1.1" stroke-dasharray="1 1"/><path d="M14.3 10.2V20.6L17.3 17.6L23 17.2Z" fill="#c9c9c9" stroke="#535353" stroke-width="0.8"/><path d="M24.5 18V21.5H21Z" fill="#c9c9c9"/></svg>
<svg style="left:43px;top:292px" width="24" height="24" viewBox="0 0 24 24"><path d="M3.5 4.5V19.5M13.8 7.8V16.9M3.5 4.5L13.8 7.8M3.5 9.5L13.8 10.8M3.5 14.5L13.8 13.9M3.5 19.5L13.8 16.9M7 5.6V18.6M10.5 6.7V17.7" fill="none" stroke="#c9c9c9" stroke-width="1.1"/><path d="M13.8 10.6L18.3 14.4H13.8Z" fill="#8c8c8c"/><path d="M13.8 14.3h4.5M13.8 16.9h7M3.5 19.5h20" stroke="#9a9a9a" stroke-width="1"/><path d="M24.5 18V21.5H21Z" fill="#c9c9c9"/></svg>
<svg style="left:13px;top:316px" width="24" height="24" viewBox="0 0 24 24"><rect x="4.5" y="5.5" width="15.5" height="13" fill="none" stroke="#c9c9c9" stroke-width="1.2"/><path d="M11.5 18.5C11.5 13 8.5 8.5 5.5 5.5M11.5 18.5C12.5 12 12 8.5 11 5.5M11.5 18.5C14 13 17.5 11 20 10.5M4.5 11.5C9 10 14 12 17.5 5.5M4.5 15.5C8 13.5 10 15.5 11.5 15.5M13.5 14.5C16 14 18 15.5 20 15" fill="none" stroke="#c9c9c9" stroke-width="1.1"/></svg>
<svg style="left:43px;top:316px" width="24" height="24" viewBox="0 0 24 24"><defs><linearGradient id="gt" x1="0" x2="1"><stop offset="0" stop-color="#444"/><stop offset="1" stop-color="#e8e8e8"/></linearGradient></defs><rect x="4.5" y="5.5" width="15.5" height="13" fill="url(#gt)" stroke="#c9c9c9" stroke-width="1"/></svg>
<svg style="left:13px;top:340px" width="24" height="24" viewBox="0 0 24 24"><path d="M4 20.5L5 17L13 9L15.5 11.5L7.5 19.5Z" fill="none" stroke="#c9c9c9" stroke-width="1.3"/><path d="M12.5 7.5L14.5 5.5C15.5 3 19 3.5 19.5 5.5C20 7.5 18.5 9 17.5 9.5L15.5 11.5Z" fill="#c9c9c9"/><path d="M11.5 7l5.5 5.5" stroke="#c9c9c9" stroke-width="1.6"/><path d="M24.5 18V21.5H21Z" fill="#c9c9c9"/></svg>
<svg style="left:43px;top:340px" width="24" height="24" viewBox="0 0 24 24"><rect x="3" y="4" width="8" height="8" fill="#c9c9c9"/><circle cx="12" cy="12" r="4.5" fill="#8a8a8a"/><circle cx="17" cy="15.5" r="4" fill="#535353" stroke="#c9c9c9" stroke-width="1.3"/></svg>
<svg style="left:13px;top:364px" width="24" height="24" viewBox="0 0 24 24"><g fill="#c9c9c9"><rect x="3" y="4" width="1.5" height="1.5"/><rect x="6" y="4" width="1.5" height="1.5"/><rect x="3" y="7" width="1.5" height="1.5"/><rect x="6" y="7" width="1.5" height="1.5"/><rect x="3" y="10" width="1.5" height="1.5"/><rect x="13" y="3" width="5" height="3"/></g><rect x="11.5" y="7.5" width="9" height="12" rx="1" fill="none" stroke="#c9c9c9" stroke-width="1.3"/><circle cx="16" cy="13.5" r="2.5" fill="none" stroke="#c9c9c9" stroke-width="1.2"/><path d="M24.5 18V21.5H21Z" fill="#c9c9c9"/></svg>
<svg style="left:43px;top:364px" width="24" height="24" viewBox="0 0 24 24"><path d="M3.5 3v16.5H21" fill="none" stroke="#c9c9c9" stroke-width="1.2"/><g fill="#c9c9c9"><rect x="6.5" y="11" width="3" height="8"/><rect x="11.5" y="5" width="3" height="14"/><rect x="16.5" y="8" width="3" height="11"/></g><path d="M24.5 18V21.5H21Z" fill="#c9c9c9"/></svg>
<svg style="left:13px;top:388px" width="24" height="24" viewBox="0 0 24 24"><path d="M7.5 3v6M3 7.5h6" stroke="#c9c9c9" stroke-width="1.1"/><path d="M8.5 9.5h8l3 3v7h-11z" fill="#777" stroke="#c9c9c9" stroke-width="1.2"/></svg>
<svg style="left:43px;top:388px" width="24" height="24" viewBox="0 0 24 24"><path d="M4 20.5L13 8L17 11Z" fill="none" stroke="#c9c9c9" stroke-width="1.3"/><path d="M13 8L15.5 3.5L20.5 7L17 11Z" fill="#c9c9c9"/><path d="M24.5 18V21.5H21Z" fill="#c9c9c9"/></svg>
<svg style="left:13px;top:412px" width="24" height="24" viewBox="0 0 24 24"><path d="M4 12C4.5 10.5 6 10.8 7 12.5L8.2 14L8.5 6C8.5 4.6 10.3 4.6 10.4 6L10.7 10.5L11.3 4.8C11.4 3.4 13.3 3.4 13.3 4.8L13.2 10.5L14.6 5.8C15 4.5 16.8 4.9 16.5 6.3L15.6 11.3L17.6 8.6C18.4 7.6 19.8 8.4 19.2 9.6C18 12 17.5 14 16 16L15.2 17.5H10.5C8 16.5 5.5 14 4 12Z" fill="#c9c9c9"/><path d="M24.5 18V21.5H21Z" fill="#c9c9c9"/></svg>
<svg style="left:43px;top:412px" width="24" height="24" viewBox="0 0 24 24"><circle cx="10" cy="10" r="5.8" fill="none" stroke="#c9c9c9" stroke-width="1.8"/><path d="M14.2 14.2L20 20" stroke="#c9c9c9" stroke-width="2.4"/></svg>
<div class="a" style="left:10px;top:438px;width:60px;height:1px;background:#484848"></div>
<!-- stroke box (behind) -->
<div class="a" style="left:28px;top:461px;width:36px;height:36px;background:#fff;border:1px solid #2a2a2a"></div>
<div class="a" style="left:38px;top:471px;width:16px;height:16px;background:#535353;border:1px solid #2a2a2a"></div>
<svg style="left:29px;top:462px" width="34" height="34" viewBox="0 0 34 34"><path d="M0.5 33.5L33.5 0.5" stroke="#ee1c24" stroke-width="2.4"/></svg>
<!-- fill box -->
<div class="a" style="left:10px;top:443px;width:36px;height:36px;background:#c29bfb;border:1px solid #2a2a2a;box-shadow:inset 0 0 0 1px #f4f4f4"></div>
<!-- swap -->
<svg style="left:54px;top:444px" width="13" height="12" viewBox="0 0 13 12"><path d="M3 3.5C7 2.5 9.5 4.5 9.5 8" fill="none" stroke="#d4d4d4" stroke-width="1.8"/><path d="M0.3 4.2L4.8 0.5V7z" fill="#d4d4d4"/><path d="M6.5 7.5h6L9.5 11.8z" fill="#d4d4d4"/></svg>
<!-- default -->
<div class="a" style="left:15px;top:489px;width:7px;height:7px;border:2px solid #111;background:#535353"></div>
<div class="a" style="left:10px;top:484px;width:9px;height:9px;background:#fff;border:1px solid #111"></div>
<!-- color mode -->
<div class="a" style="left:10px;top:504px;width:59px;height:20px;border:1px solid #5e5e5e;border-radius:3px"></div>
<div class="a" style="left:11px;top:505px;width:18px;height:18px;background:#3a3a3a;border-radius:2px 0 0 2px"></div>
<div class="sep" style="left:29px;top:505px;height:18px;background:#5e5e5e"></div>
<div class="sep" style="left:49px;top:505px;height:18px;background:#5e5e5e"></div>
<div class="a" style="left:13px;top:507px;width:13px;height:13px;background:#c29bfb;border:1px solid #f0f0f0"></div>
<div class="a" style="left:33px;top:507px;width:13px;height:13px;background:linear-gradient(90deg,#fff,#222);border:1px solid #222"></div>
<div class="a" style="left:53px;top:507px;width:13px;height:13px;background:#fff;border:1px solid #222"></div>
<svg style="left:54px;top:508px" width="11" height="11" viewBox="0 0 11 11"><path d="M0 11L11 0" stroke="#ee1c24" stroke-width="3"/></svg>
<!-- draw mode -->
<div class="a" style="left:10px;top:528px;width:59px;height:19px;border:1px solid #5e5e5e;border-radius:3px"></div>
<div class="a" style="left:11px;top:529px;width:18px;height:17px;background:#3a3a3a;border-radius:2px 0 0 2px"></div>
<div class="sep" style="left:29px;top:529px;height:17px;background:#5e5e5e"></div>
<div class="sep" style="left:49px;top:529px;height:17px;background:#5e5e5e"></div>
<svg style="left:14px;top:531px" width="13" height="13" viewBox="0 0 13 13"><circle cx="5" cy="5.5" r="4.2" fill="#8a8a8a" stroke="#d8d8d8" stroke-width="1.2"/><rect x="5.5" y="6" width="6" height="6" fill="#d8d8d8"/></svg>
<svg style="left:34px;top:531px" width="13" height="13" viewBox="0 0 13 13"><rect x="6" y="6.5" width="6" height="5.5" fill="#c8c8c8"/><circle cx="5" cy="5.5" r="4.2" fill="#777" stroke="#c8c8c8" stroke-width="1.2"/></svg>
<svg style="left:54px;top:532px" width="11" height="11" viewBox="0 0 11 11"><circle cx="5.5" cy="5.5" r="4" fill="none" stroke="#6e6e6e" stroke-width="1.2"/><path d="M5.5 5.5h4a4 4 0 0 1-4 4z" fill="#6e6e6e"/></svg>
<!-- screen mode -->
<div class="a" style="left:29px;top:561px;width:14px;height:11px;background:#6c6c6c;border:1px solid #c0c0c0"></div>
<div class="a" style="left:37px;top:555px;width:14px;height:11px;background:#6c6c6c;border:1px solid #c0c0c0;border-top-width:2px"></div>
<!-- more -->
<div class="a" style="left:34px;top:594px;width:3px;height:3px;border-radius:2px;background:#c4c4c4"></div>
<div class="a" style="left:39px;top:594px;width:3px;height:3px;border-radius:2px;background:#c4c4c4"></div>
<div class="a" style="left:44px;top:594px;width:3px;height:3px;border-radius:2px;background:#c4c4c4"></div>


<!-- ===== RIGHT ICON STRIP ===== -->
<div class="a" style="left:1071px;top:69px;width:294px;height:11px;background:#424242"></div><div class="a" style="left:1071px;top:80px;width:294px;height:1px;background:#3e3e3e"></div>
<div class="a" style="left:1071px;top:81px;width:37px;height:628px;background:#535353"></div>
<div class="a" style="left:1108px;top:81px;width:3px;height:628px;background:#3e3e3e"></div><div class="a" style="left:1109px;top:81px;width:1px;height:628px;background:#4c4c4c"></div>
<svg class="a" style="left:1094px;top:72px" width="9" height="5.4" viewBox="0 0 10 6"><path d="M4.2 0.3L1 3l3.2 2.7zM9 0.3L5.8 3L9 5.7z" fill="#dadada"/></svg>
<svg class="a" style="left:1347px;top:72px" width="9" height="5.4" viewBox="0 0 10 6"><path d="M1 0.3L4.2 3L1 5.7zM5.8 0.3L9 3L5.8 5.7z" fill="#dadada"/></svg>
<div class="a" style="left:1361px;top:69px;width:1px;height:640px;background:#3e3e3e"></div>
<div class="a" style="left:1362px;top:69px;width:3px;height:640px;background:#535353"></div>
<!-- group separators -->
<div class="a" style="left:1071px;top:177px;width:37px;height:1px;background:#3e3e3e"></div>
<div class="a" style="left:1071px;top:246px;width:37px;height:1px;background:#3e3e3e"></div>
<div class="a" style="left:1071px;top:287px;width:37px;height:1px;background:#3e3e3e"></div>
<div class="grip" style="left:1080px;top:84px;width:20px;height:4px"></div>
<div class="grip" style="left:1080px;top:181px;width:20px;height:4px"></div>
<div class="grip" style="left:1080px;top:250px;width:20px;height:4px"></div>
<div class="grip" style="left:1080px;top:291px;width:20px;height:4px"></div>
<!-- swatches -->
<svg style="left:1082px;top:99px" width="17" height="12" viewBox="0 0 17 13" preserveAspectRatio="none"><rect x="0.5" y="0.5" width="16" height="12" fill="#777" stroke="#cfcfcf"/><path d="M6 0v13M11.5 0v13M0 6.5h17" stroke="#cfcfcf" stroke-width="1.2"/><rect x="6.5" y="1" width="4.5" height="5" fill="#cfcfcf"/></svg>
<!-- brushes -->
<svg style="left:1082px;top:121px" width="18" height="21" viewBox="0 0 18 21"><path d="M4.5 14.5h9v6h-9z" fill="#cfcfcf"/><path d="M6 14.5L3.2 9" stroke="#cfcfcf" stroke-width="1.3"/><path d="M3.5 10C1 8.5 1.5 5.5 2.5 4.5C4.5 5 5.5 8 3.5 10z" fill="#cfcfcf"/><path d="M8.7 14.5V8" stroke="#cfcfcf" stroke-width="1.3"/><path d="M7.5 8.5C7 6 7.5 3 8.5 1.5L9.5 0.5C10 3 10.5 6 10 8.5z" fill="#cfcfcf"/><path d="M11.5 14.5L14 9" stroke="#cfcfcf" stroke-width="1.3"/><path d="M12.5 8.5C12 6.5 13.5 4.5 15.5 4.5C17 4.5 17.5 6 17 7.5C15.5 7 14.5 8 14.5 9.5z" fill="#cfcfcf"/></svg>
<!-- symbols (club) -->
<svg style="left:1081px;top:150px" width="19" height="18" viewBox="0 0 19 18"><circle cx="9.5" cy="4.5" r="4" fill="#cfcfcf"/><circle cx="5" cy="10" r="4" fill="#cfcfcf"/><circle cx="14" cy="10" r="4" fill="#cfcfcf"/><path d="M9.5 8C9.5 13 8.5 15.5 3.5 16.7V18H15.5V16.7C10.5 15.5 9.5 13 9.5 8z" fill="#cfcfcf"/></svg>
<!-- appearance -->
<svg style="left:1081px;top:192px" width="19" height="19" viewBox="0 0 19 19"><circle cx="9.5" cy="9.5" r="8.5" fill="none" stroke="#cfcfcf" stroke-width="0.9" stroke-dasharray="1.5 1.5"/><circle cx="9.5" cy="9.5" r="6" fill="#cfcfcf"/></svg>
<!-- graphic styles -->
<svg style="left:1081px;top:220px" width="19" height="18" viewBox="0 0 19 18"><rect x="5.5" y="0.5" width="13" height="13" fill="none" stroke="#cfcfcf" stroke-width="1.2"/><rect x="0.5" y="9.5" width="6" height="6" fill="#535353" stroke="#cfcfcf" stroke-width="1.1"/><rect x="3.5" y="12.5" width="4" height="4" fill="#535353" stroke="#cfcfcf" stroke-width="1"/></svg>
<!-- gradient -->
<div class="a" style="left:1082px;top:264px;width:17px;height:12px;background:linear-gradient(90deg,#2c2c2c,#f4f4f4);border:1px solid #cfcfcf"></div>
<!-- layers (active) -->
<div class="a" style="left:1075px;top:299px;width:29px;height:23px;background:#2e2e2e;border:1px solid #5c5c5c;border-radius:3px"></div>
<svg style="left:1081px;top:302px" width="18" height="18" viewBox="0 0 18 18"><path d="M9 1L17 6.5L9 12L1 6.5z" fill="#f0f0f0"/><path d="M2.5 10.5L9 15L15.5 10.5" fill="none" stroke="#f0f0f0" stroke-width="1.8"/></svg>
<!-- artboards -->
<svg style="left:1081px;top:330px" width="19" height="18" viewBox="0 0 19 18"><rect x="0.7" y="0.7" width="11" height="11" fill="none" stroke="#cfcfcf" stroke-width="1.3"/><rect x="6.5" y="6.5" width="11.5" height="10.5" fill="#535353" stroke="#cfcfcf" stroke-width="1.3"/></svg>
<!-- asset export -->
<svg style="left:1082px;top:358px" width="18" height="17" viewBox="0 0 18 17"><path d="M7 3.5H1v12.5h13V10" fill="none" stroke="#cfcfcf" stroke-width="1.6"/><path d="M10 1h6.5v6.5M16.5 1L9 8.5" fill="none" stroke="#cfcfcf" stroke-width="1.6"/></svg>


<!-- ===== PROPERTIES PANEL ===== -->
<div class="a" style="left:1111px;top:81px;width:240px;height:628px;background:#535353"></div>
<div class="a" style="left:1351px;top:81px;width:14px;height:628px;background:#535353"></div>
<style>
.pl{-webkit-text-stroke:0.2px currentColor;position:absolute;white-space:nowrap;line-height:1;font-size:10px;color:#d2d2d2;letter-spacing:-0.2px}
.pv{-webkit-text-stroke:0.2px currentColor;position:absolute;white-space:nowrap;line-height:1;font-size:10px;color:#ececec;letter-spacing:-0.1px}
.pbox{position:absolute;background:#444;border:1px solid #5f5f5f;border-radius:3px}
.pdiv{position:absolute;left:1111px;width:238px;height:2px;background:#4a4a4a}
.d3{position:absolute;width:13px;height:3px}
.d3 i{position:absolute;top:0;width:3px;height:3px;border-radius:2px;background:#d8d8d8}
</style>
<!-- tabs -->
<div class="a" style="left:1111px;top:81px;width:250px;height:26px;background:#424242"></div>
<div class="a" style="left:1111px;top:81px;width:67px;height:27px;background:#535353"></div>
<div class="sep" style="left:1235px;top:81px;height:26px;background:#4e4e4e"></div>
<div class="sep" style="left:1178px;top:81px;height:26px;background:#3a3a3a"></div>
<div class="t" style="left:1120.2px;top:90px;font-size:10px;font-weight:bold;color:#f2f2f2;letter-spacing:-0.24px;">Properties</div>
<div class="t" style="left:1186.3px;top:90px;font-size:10px;color:#c0c0c0;letter-spacing:0.08px;">Libraries</div>
<div class="pl" style="left:1120.8px;top:121px;letter-spacing:-0.15px;">Group</div>
<div class="pdiv" style="top:140px"></div>
<div class="pl" style="left:1121.0px;top:155px;letter-spacing:-0.13px;">Transform</div>
<!-- reference point -->
<svg style="left:1121px;top:186px" width="20" height="20" viewBox="0 0 20 20"><path d="M2.5 2.5h15v15h-15zM10 2.5v15M2.5 10h15" fill="none" stroke="#bdbdbd" stroke-width="0.9"/><g fill="#535353" stroke="#d0d0d0" stroke-width="0.9"><rect x="0.5" y="0.5" width="4" height="4"/><rect x="8" y="0.5" width="4" height="4"/><rect x="15.5" y="0.5" width="4" height="4"/><rect x="0.5" y="8" width="4" height="4"/><rect x="15.5" y="8" width="4" height="4"/><rect x="0.5" y="15.5" width="4" height="4"/><rect x="8" y="15.5" width="4" height="4"/><rect x="15.5" y="15.5" width="4" height="4"/></g><rect x="7.5" y="7.5" width="5" height="5" fill="#fff"/></svg>
<div class="pl" style="left:1151.1px;top:180px;letter-spacing:-0.65px;">X:</div>
<div class="pbox" style="left:1167px;top:172px;width:57px;height:21px"></div>
<div class="pv" style="left:1173.2px;top:178px;letter-spacing:-0.37px;">543.3084 p</div>
<div class="pl" style="left:1238.9px;top:180px;letter-spacing:-0.85px;">W:</div>
<div class="pbox" style="left:1258px;top:172px;width:57px;height:21px"></div>
<div class="pv" style="left:1264.0px;top:178px;letter-spacing:-0.46px;">644.7974 p:</div>
<div class="pl" style="left:1151.1px;top:206px;letter-spacing:-0.11px;">Y:</div>
<div class="pbox" style="left:1167px;top:198px;width:57px;height:21px"></div>
<div class="pv" style="left:1173.2px;top:204px;letter-spacing:-0.37px;">541.9218 p</div>
<div class="pl" style="left:1238.9px;top:206px;letter-spacing:0.50px;">H:</div>
<div class="pbox" style="left:1258px;top:198px;width:57px;height:21px"></div>
<div class="pv" style="left:1264.0px;top:204px;letter-spacing:-0.39px;">880.7117 p:</div>
<!-- link broken -->
<svg style="left:1328px;top:187px" width="17" height="18" viewBox="0 0 17 18"><path d="M6 7V4.5a3 3 0 0 1 6 0V7M6 10.5V13a3 3 0 0 0 6 0v-2.5" fill="none" stroke="#d0d0d0" stroke-width="1.6"/><path d="M1.5 1L15.5 16.5" stroke="#d0d0d0" stroke-width="1.4"/></svg>
<!-- angle -->
<svg style="left:1146px;top:226px" width="16" height="12" viewBox="0 0 16 12"><path d="M9.5 1L1.5 10.5H11.5" fill="none" stroke="#d0d0d0" stroke-width="1.2"/><path d="M5.5 5.5c2 1 3 3 3 5" fill="none" stroke="#d0d0d0" stroke-width="1"/><rect x="13.5" y="4" width="1.3" height="1.3" fill="#d0d0d0"/><rect x="13.5" y="8.5" width="1.3" height="1.3" fill="#d0d0d0"/></svg>
<div class="pbox" style="left:1163px;top:224px;width:57px;height:21px"></div>
<div class="sep" style="left:1201px;top:225px;height:19px;background:#5f5f5f"></div>
<div class="pv" style="left:1168px;top:230px">0°</div>
<svg style="left:1205px;top:232px" width="9" height="6" viewBox="0 0 9 6"><path d="M1 1l3.5 3.5L8 1" fill="none" stroke="#e6e6e6" stroke-width="1.4"/></svg>
<!-- flip icons -->
<svg style="left:1261px;top:229px" width="15" height="12" viewBox="0 0 15 12"><path d="M1 1.5v9l4.5-4.5z" fill="none" stroke="#d0d0d0" stroke-width="1"/><path d="M14 1.5v9L9.5 6z" fill="#d0d0d0"/><path d="M7.5 0v12" stroke="#d0d0d0" stroke-width="1" stroke-dasharray="1.5 1"/></svg>
<svg style="left:1286px;top:228px" width="12" height="15" viewBox="0 0 12 15"><path d="M1.5 1h9L6 5.5z" fill="#d0d0d0"/><path d="M1.5 14h9L6 9.5z" fill="none" stroke="#d0d0d0" stroke-width="1"/><path d="M0 7.5h12" stroke="#d0d0d0" stroke-width="1" stroke-dasharray="1.5 1"/></svg>
<div class="d3" style="left:1329px;top:255px"><i style="left:0"></i><i style="left:5px"></i><i style="left:10px"></i></div>
<div class="pdiv" style="top:265px"></div>
<!-- Appearance -->
<div class="pl" style="left:1121.0px;top:281px;letter-spacing:-0.23px;">Appearance</div>
<div class="a" style="left:1121px;top:303px;width:18px;height:18px;background:#c29bfb;border:1px solid #2e2e2e;box-shadow:inset 0 0 0 1px #f2f2f2"></div>
<div class="pl" style="left:1151.1px;top:309px;letter-spacing:-0.19px;">Fill</div>
<div class="a" style="left:1121px;top:332px;width:18px;height:18px;background:#fff;border:1px solid #2e2e2e"></div>
<svg style="left:1121px;top:332px" width="18" height="18" viewBox="0 0 18 18"><rect x="5.5" y="5.5" width="7" height="7" fill="#585858" stroke="#262626" stroke-width="1.6"/><path d="M0.5 17.5L17.5 0.5" stroke="#ee1c24" stroke-width="1.8"/></svg>
<div class="pl" style="left:1151.1px;top:338px;color:#ececec;letter-spacing:-0.20px;"><span class="dot bd">Stroke</span></div>
<div class="pbox" style="left:1199px;top:330px;width:71px;height:22px"></div>
<div class="sep" style="left:1218px;top:331px;height:20px;background:#5f5f5f"></div>
<div class="sep" style="left:1251px;top:331px;height:20px;background:#5f5f5f"></div>
<svg style="left:1204px;top:334px" width="9" height="15" viewBox="0 0 9 15"><path d="M1 5l3.5-3.5L8 5M1 10l3.5 3.5L8 10" fill="none" stroke="#e6e6e6" stroke-width="1.3"/></svg>
<svg style="left:1255px;top:338px" width="9" height="6" viewBox="0 0 9 6"><path d="M1 1l3.5 3.5L8 1" fill="none" stroke="#e6e6e6" stroke-width="1.4"/></svg>
<!-- opacity -->
<div class="a" style="left:1122px;top:362px;width:16px;height:16px;border:1px solid #8e8e8e;background:conic-gradient(#6b6b6b 25%,#4d4d4d 0 50%,#6b6b6b 0 75%,#4d4d4d 0) 0 0/8px 8px"></div>
<div class="pl" style="left:1151.1px;top:367px;color:#ececec;letter-spacing:-0.15px;"><span class="dot bd">Opacity</span></div>
<div class="pbox" style="left:1199px;top:359px;width:71px;height:22px"></div>
<div class="sep" style="left:1251px;top:360px;height:20px;background:#5f5f5f"></div>
<div class="pv" style="left:1204.7px;top:365px;letter-spacing:-0.63px;">100%</div>
<svg style="left:1256px;top:365px" width="7" height="10" viewBox="0 0 7 10"><path d="M1.5 1l3.5 4-3.5 4" fill="none" stroke="#e6e6e6" stroke-width="1.4"/></svg>
<div class="t" style="left:1127px;top:396px;font-size:14px;font-style:italic;color:#c8c8c8;letter-spacing:-0.5px">fx</div><svg style="left:1140px;top:405px" width="4" height="3" viewBox="0 0 4 3"><path d="M0 0h4L2 3z" fill="#c8c8c8"/></svg>
<div class="d3" style="left:1329px;top:427px"><i style="left:0"></i><i style="left:5px"></i><i style="left:10px"></i></div>
<div class="pdiv" style="top:436px"></div>
<!-- Align -->
<div class="pl" style="left:1121.0px;top:452px;letter-spacing:-0.16px;">Align</div>
<svg style="left:1123px;top:477px" width="26" height="20" viewBox="0 0 26 20"><path d="M4 0.5v4M0.5 4h4" stroke="#d0d0d0" stroke-width="1"/><path d="M5.5 5.5h7l3.5 3.5v8h-10.5z" fill="#757575" stroke="#d0d0d0" stroke-width="1.1"/><path d="M12.5 5.5v3.5h3.5" fill="none" stroke="#d0d0d0" stroke-width="1"/><path d="M19 9.5l2.5 2.5 2.5-2.5" fill="none" stroke="#d0d0d0" stroke-width="1.2"/></svg>
<svg style="left:1162px;top:478px" width="16" height="18" viewBox="0 0 16 18"><path d="M1 0v18" stroke="#d0d0d0" stroke-width="1.2"/><rect x="3.5" y="3" width="7" height="5" fill="#d0d0d0"/><rect x="3.5" y="10.5" width="12" height="5" fill="#d0d0d0"/></svg>
<svg style="left:1192px;top:478px" width="16" height="18" viewBox="0 0 16 18"><path d="M8 0v18" stroke="#d0d0d0" stroke-width="1.2"/><rect x="3.5" y="3" width="9" height="5" fill="#d0d0d0"/><rect x="1" y="10.5" width="14" height="5" fill="#d0d0d0"/></svg>
<svg style="left:1222px;top:478px" width="16" height="18" viewBox="0 0 16 18"><path d="M15 0v18" stroke="#d0d0d0" stroke-width="1.2"/><rect x="5.5" y="3" width="7" height="5" fill="#d0d0d0"/><rect x="0.5" y="10.5" width="12" height="5" fill="#d0d0d0"/></svg>
<svg style="left:1251px;top:479px" width="18" height="16" viewBox="0 0 18 16"><path d="M0 1h18" stroke="#d0d0d0" stroke-width="1.2"/><rect x="3" y="3.5" width="5" height="12" fill="#d0d0d0"/><rect x="10.5" y="3.5" width="5" height="7" fill="#d0d0d0"/></svg>
<svg style="left:1281px;top:479px" width="18" height="16" viewBox="0 0 18 16"><path d="M0 8h18" stroke="#d0d0d0" stroke-width="1.2"/><rect x="3" y="1" width="5" height="14" fill="#d0d0d0"/><rect x="10.5" y="3.5" width="5" height="9" fill="#d0d0d0"/></svg>
<svg style="left:1311px;top:479px" width="18" height="16" viewBox="0 0 18 16"><path d="M0 15h18" stroke="#d0d0d0" stroke-width="1.2"/><rect x="3" y="0.5" width="5" height="12" fill="#d0d0d0"/><rect x="10.5" y="5.5" width="5" height="7" fill="#d0d0d0"/></svg>
<div class="d3" style="left:1329px;top:512px"><i style="left:0"></i><i style="left:5px"></i><i style="left:10px"></i></div>
<!-- Pathfinder -->
<div class="pl" style="left:1121.0px;top:536px;color:#e8e8e8;letter-spacing:-0.03px;">Pathfinder</div>
<svg style="left:1126px;top:563px" width="16" height="15" viewBox="0 0 16 15"><path d="M0.5 0.5h9v4h5.5v10h-10v-5h-4.5z" fill="#e0e0e0"/></svg>
<svg style="left:1157px;top:563px" width="16" height="15" viewBox="0 0 16 15"><path d="M0.5 0.5h9v4.5h-4.5v4.5h-4.5z" fill="#e0e0e0"/><rect x="5.5" y="5" width="9.5" height="9.5" fill="none" stroke="#e0e0e0" stroke-width="1.1"/></svg>
<svg style="left:1188px;top:563px" width="16" height="15" viewBox="0 0 16 15"><rect x="0.5" y="0.5" width="9.5" height="9.5" fill="none" stroke="#e0e0e0" stroke-width="1.1"/><rect x="5.5" y="5" width="9.5" height="9.5" fill="none" stroke="#e0e0e0" stroke-width="1.1"/><rect x="5.5" y="5" width="4.5" height="5" fill="#e0e0e0"/></svg>
<svg style="left:1219px;top:563px" width="16" height="15" viewBox="0 0 16 15"><path d="M0.5 0.5h9.5v4.5h5v9.5h-9.5v-4.5h-5zM5.5 5v5h4.5v-5z" fill="#e0e0e0" fill-rule="evenodd"/></svg>
<div class="a" style="left:1283px;top:554px;width:62px;height:20px;background:#5b5b5b;border-radius:2px"></div>
<div class="pl" style="left:1298.1px;top:560px;color:#7c7c7c;letter-spacing:-0.24px;">Expand</div>
<div class="d3" style="left:1329px;top:585px"><i style="left:0"></i><i style="left:5px"></i><i style="left:10px"></i></div>
<!-- popup pathfinder panel (dimmed) -->
<div class="a" style="left:1346px;top:594px;width:5px;height:115px;background:linear-gradient(90deg,#474747,#535353)"></div>
<!-- underlying bits visible right of popup -->
<div class="a" style="left:1347px;top:639px;width:2px;height:20px;border:1px solid #5f5f5f;border-left:none;border-radius:0 3px 3px 0"></div>
<div class="a" style="left:1347px;top:670px;width:2px;height:20px;border:1px solid #5f5f5f;border-left:none;border-radius:0 3px 3px 0"></div>
<div class="a" style="left:1113px;top:593px;width:233px;height:120px;background:#535353;border:1px solid #636363"></div>
<div class="a" style="left:1330px;top:597px;width:2px;height:2px;background:#8a8a8a"></div><div class="a" style="left:1334px;top:598px;width:6px;height:1px;background:#8a8a8a"></div>
<div class="pl" style="left:1119.8px;top:614px;color:#767676;letter-spacing:-0.21px;">Shape Modes:</div>

<svg style="left:1126px;top:636px" width="16" height="15" viewBox="0 0 16 15"><path d="M0.5 0.5h9v4h5.5v10h-10v-5h-4.5z" fill="#6e6e6e"/></svg>
<svg style="left:1162px;top:636px" width="16" height="15" viewBox="0 0 16 15"><path d="M0.5 0.5h9v4.5h-4.5v4.5h-4.5z" fill="#6e6e6e"/><rect x="5.5" y="5" width="9.5" height="9.5" fill="none" stroke="#6e6e6e" stroke-width="1.1"/></svg>
<svg style="left:1199px;top:636px" width="16" height="15" viewBox="0 0 16 15"><rect x="0.5" y="0.5" width="9.5" height="9.5" fill="none" stroke="#6e6e6e" stroke-width="1.1"/><rect x="5.5" y="5" width="9.5" height="9.5" fill="none" stroke="#6e6e6e" stroke-width="1.1"/><rect x="5.5" y="5" width="4.5" height="5" fill="#6e6e6e"/></svg>
<svg style="left:1236px;top:636px" width="16" height="15" viewBox="0 0 16 15"><path d="M0.5 0.5h9.5v4.5h5v9.5h-9.5v-4.5h-5zM5.5 5v5h4.5v-5z" fill="#6e6e6e" fill-rule="evenodd"/></svg>
<div class="a" style="left:1269px;top:634px;width:71px;height:18px;background:#5b5b5b;border-radius:2px"></div>
<div class="pl" style="left:1288.3px;top:639px;color:#7c7c7c;letter-spacing:-0.34px;">Expand</div>
<div class="pl" style="left:1119.8px;top:665px;color:#767676;letter-spacing:-0.05px;">Pathfinders:</div>
<svg style="left:1129px;top:688px" width="200" height="15" viewBox="0 0 200 15"><g fill="none" stroke="#6e6e6e" stroke-width="1.1">
<rect x="0.5" y="0.5" width="9.5" height="9.5"/><rect x="5" y="5" width="9.5" height="9.5"/><rect x="5" y="5" width="5" height="5" fill="#6e6e6e"/>
<path d="M37.5 0.5h9.5v4.5h5v9.5h-9.5v-4.5h-5z" fill="#6e6e6e"/>
<path d="M75 0.5h9.5v4.5h5v9.5h-9.5v-4.5h-5z" fill="#6e6e6e"/>
<rect x="112.5" y="0.5" width="9.5" height="9.5"/><rect x="117" y="5" width="9.5" height="9.5"/><rect x="117" y="5" width="5" height="5" fill="#6e6e6e"/>
<rect x="150" y="0.5" width="9.5" height="9.5"/><rect x="154.5" y="5" width="9.5" height="9.5"/>
<rect x="187" y="0.5" width="9.5" height="9.5"/><rect x="191.5" y="5" width="8" height="9.5" fill="#6e6e6e"/>
</g></svg>

<!-- right edge line --><div class="a" style="left:1361px;top:69px;width:1px;height:640px;background:#3b3b3b"></div>

<!-- ===== LAYERS PANEL ===== -->
<!-- floating layers panel -->
<div class="a" style="left:828px;top:285px;width:241px;height:365px;background:#535353;box-shadow:0 1px 4px rgba(0,0,0,.45)"></div>
<div class="a" style="left:828px;top:285px;width:241px;height:4px;background:#3d3d3d"></div>
<div class="a" style="left:828px;top:289px;width:241px;height:26px;background:#424242"></div>
<div class="a" style="left:828px;top:289px;width:48px;height:27px;background:#535353"></div>
<div class="sep" style="left:876px;top:289px;height:26px;background:#383838"></div>
<div class="sep" style="left:934px;top:289px;height:26px;background:#505050"></div>
<div class="sep" style="left:1004px;top:289px;height:26px;background:#505050"></div>
<div class="t" style="left:838.1px;top:298px;font-size:9.8px;font-weight:bold;color:#f0f0f0;letter-spacing:-0.68px;">Layers</div>
<div class="t" style="left:885.0px;top:298px;font-size:9.8px;font-weight:bold;color:#b4b4b4;letter-spacing:-0.04px;">Artboards</div>
<div class="t" style="left:943.3px;top:298px;font-size:9.8px;font-weight:bold;color:#b4b4b4;letter-spacing:-0.27px;">Asset Export</div>
<svg style="left:1028px;top:298px" width="36" height="9" viewBox="0 0 36 9"><path d="M0.7 1l3.3 3.5L0.7 8M5.7 1L9 4.5L5.7 8" fill="none" stroke="#d4d4d4" stroke-width="1.2"/><path d="M17.5 0v9" stroke="#b0b0b0" stroke-width="1"/><path d="M25 1.5h10.5M25 4.5h10.5M25 7.5h10.5" stroke="#d4d4d4" stroke-width="1.1"/></svg>
<!-- list area -->
<div class="a" style="left:834px;top:322px;width:230px;height:300px;border:1px solid #626262;border-radius:3px"></div>
<div class="a" style="left:835px;top:323px;width:228px;height:20px;background:#50667f"></div>
<div class="a" style="left:835px;top:343px;width:228px;height:1px;background:#5e5e5e"></div>
<div class="a" style="left:835px;top:364px;width:228px;height:1px;background:#5e5e5e"></div>
<div class="a" style="left:835px;top:385px;width:228px;height:1px;background:#5e5e5e"></div>
<div class="sep" style="left:855px;top:323px;height:62px;background:#5e5e5e"></div>
<div class="sep" style="left:876px;top:323px;height:62px;background:#5e5e5e"></div>
<div class="sep" style="left:1027px;top:323px;height:62px;background:#5e5e5e"></div>
<div class="a" style="left:878px;top:324px;width:3.4px;height:18px;background:#4f80ff"></div>
<div class="a" style="left:878px;top:345px;width:3.4px;height:18px;background:#4f80ff"></div>
<div class="a" style="left:878px;top:366px;width:3.4px;height:18px;background:#4f80ff"></div>
<!-- eyes -->
<svg style="left:838px;top:328px" width="13" height="8.4" viewBox="0 0 14 9"><path d="M0.3 4.5C3 -0.5 11 -0.5 13.7 4.5C11 9.5 3 9.5 0.3 4.5z" fill="#d2d2d2"/><circle cx="7" cy="4.5" r="2.3" fill="none" stroke="#4e5660" stroke-width="1.1"/><path d="M7 3.2l1.3 1.3L7 5.8z" fill="#4e5660"/></svg>
<svg style="left:838px;top:349px" width="13" height="8.4" viewBox="0 0 14 9"><path d="M0.3 4.5C3 -0.5 11 -0.5 13.7 4.5C11 9.5 3 9.5 0.3 4.5z" fill="#d2d2d2"/><circle cx="7" cy="4.5" r="2.3" fill="none" stroke="#4e5660" stroke-width="1.1"/><path d="M7 3.2l1.3 1.3L7 5.8z" fill="#4e5660"/></svg>
<svg style="left:838px;top:370px" width="13" height="8.4" viewBox="0 0 14 9"><path d="M0.3 4.5C3 -0.5 11 -0.5 13.7 4.5C11 9.5 3 9.5 0.3 4.5z" fill="#d2d2d2"/><circle cx="7" cy="4.5" r="2.3" fill="none" stroke="#4e5660" stroke-width="1.1"/><path d="M7 3.2l1.3 1.3L7 5.8z" fill="#4e5660"/></svg>
<!-- layer 1 -->
<svg style="left:889px;top:330px" width="9" height="6" viewBox="0 0 9 6"><path d="M1 1l3.5 3.5L8 1" fill="none" stroke="#ececec" stroke-width="1.4"/></svg>
<div class="a" style="left:907px;top:324px;width:18px;height:18px;background:#fff;border:1px solid #111"></div>
<svg style="left:908px;top:325px" width="16" height="16" viewBox="0 0 16 16"><path d="M8 5.5C5 5 4.5 3 4.5 1.5L6.5 3L7 0.5L8 2.5L9 0.5L9.5 3L11.5 1.5C11.5 3 11 5 8 5.5z" fill="#c9a7fc"/><path d="M8 14.5C3.5 15 2.5 11 2.5 9.5L4.5 10.5L4.5 8L6.5 9.5L8 7L9.5 9.5L11.5 8L11.5 10.5L13.5 9.5C13.5 11 12.5 15 8 14.5z" fill="#d9c0fc"/></svg>
<div class="t" style="left:930.2px;top:328px;font-size:10.5px;color:#f0f0f0;letter-spacing:-0.54px;">Layer 1</div>
<svg style="left:1033px;top:329px" width="9" height="9" viewBox="0 0 9 9"><circle cx="4.5" cy="4.5" r="3.3" fill="none" stroke="#e0e0e0" stroke-width="1"/></svg>
<div class="a" style="left:1048px;top:329px;width:8px;height:8px;background:#4f80ff;border:1px solid #1a1a1a"></div>
<svg style="left:1056px;top:323px" width="7" height="7" viewBox="0 0 7 7"><path d="M0 0h7v7z" fill="#c8c8c8"/></svg>
<!-- group rows -->
<svg style="left:911px;top:349px" width="7" height="10" viewBox="0 0 7 10"><path d="M1.5 1l3.5 4-3.5 4" fill="none" stroke="#ececec" stroke-width="1.4"/></svg>
<div class="a" style="left:930px;top:345px;width:18px;height:18px;background:#fff;border:1px solid #111"></div>
<svg style="left:931px;top:346px" width="16" height="16" viewBox="0 0 16 16"><path d="M8 12.5C3 13.5 1.5 8 1 5L4.5 7L5.5 2L8 6.5L10.5 2L11.5 7L15 5C14.5 8 13 13.5 8 12.5z" fill="#c9a7fc"/></svg>
<div class="t" style="left:953.6px;top:349px;font-size:10.5px;color:#f0f0f0;letter-spacing:-0.16px;">&lt;Group&gt;</div>
<svg style="left:1031px;top:347px" width="13" height="13" viewBox="0 0 13 13"><circle cx="6.5" cy="6.5" r="5.5" fill="none" stroke="#e0e0e0" stroke-width="1"/><circle cx="6.5" cy="6.5" r="3.3" fill="none" stroke="#e0e0e0" stroke-width="1"/></svg>
<div class="a" style="left:1048px;top:350px;width:8px;height:8px;background:#4f80ff;border:1px solid #1a1a1a"></div>
<svg style="left:911px;top:370px" width="7" height="10" viewBox="0 0 7 10"><path d="M1.5 1l3.5 4-3.5 4" fill="none" stroke="#ececec" stroke-width="1.4"/></svg>
<div class="a" style="left:930px;top:366px;width:18px;height:18px;background:#fff;border:1px solid #111"></div>
<svg style="left:931px;top:367px" width="16" height="16" viewBox="0 0 16 16"><path d="M8 13C3 14 1 10 1 7.5L3.5 8.5L3.5 4.5L6 7L8 3L10 7L12.5 4.5L12.5 8.5L15 7.5C15 10 13 14 8 13zM8 11.5L10.5 8.5L8 9.5L5.5 8.5z" fill="#d9c0fc" fill-rule="evenodd"/></svg>
<div class="t" style="left:953.6px;top:370px;font-size:10.5px;color:#f0f0f0;letter-spacing:-0.16px;">&lt;Group&gt;</div>
<svg style="left:1031px;top:368px" width="13" height="13" viewBox="0 0 13 13"><circle cx="6.5" cy="6.5" r="5.5" fill="none" stroke="#e0e0e0" stroke-width="1"/><circle cx="6.5" cy="6.5" r="3.3" fill="none" stroke="#e0e0e0" stroke-width="1"/></svg>
<div class="a" style="left:1048px;top:371px;width:8px;height:8px;background:#4f80ff;border:1px solid #1a1a1a"></div>
<!-- footer -->
<div class="t" style="left:834.3px;top:627px;font-size:10.5px;color:#d8d8d8;letter-spacing:-0.44px;">1 Layer</div>
<svg style="left:900px;top:625px" width="13" height="13" viewBox="0 0 13 13"><path d="M5 2.5H0.7v9.8h9.8V8" fill="none" stroke="#d0d0d0" stroke-width="1.3"/><path d="M7.5 0.7h4.8v4.8M12.3 0.7L6.5 6.5" fill="none" stroke="#d0d0d0" stroke-width="1.3"/></svg>
<svg style="left:925px;top:625px" width="14" height="13" viewBox="0 0 14 13"><circle cx="5.2" cy="5.2" r="4" fill="none" stroke="#d0d0d0" stroke-width="1.4"/><path d="M8.2 8.2L12.5 12.5" stroke="#d0d0d0" stroke-width="1.8"/></svg>
<svg style="left:952px;top:626px" width="12" height="12" viewBox="0 0 12 12"><rect x="0.6" y="0.6" width="7.8" height="7.8" fill="none" stroke="#d0d0d0" stroke-width="1.2"/><rect x="3" y="3" width="5.5" height="5.5" fill="#d0d0d0"/><rect x="3.6" y="3.6" width="7.8" height="7.8" fill="none" stroke="#8a8a8a" stroke-width="1"/></svg>
<svg style="left:976px;top:625px" width="16" height="13" viewBox="0 0 16 13"><path d="M0.7 0.5v4.5h4M3 3l2 2-2 2" fill="none" stroke="#d0d0d0" stroke-width="1.2"/><rect x="6.6" y="3.6" width="8.8" height="8.8" fill="none" stroke="#d0d0d0" stroke-width="1.2"/><path d="M11 5.5v5M8.5 8h5" stroke="#d0d0d0" stroke-width="1.2"/></svg>
<svg style="left:1005px;top:626px" width="11" height="12" viewBox="0 0 11 12"><rect x="0.6" y="0.6" width="9.8" height="10.3" fill="none" stroke="#d0d0d0" stroke-width="1.2"/><path d="M5.5 3.5v5M3 6h5" stroke="#d0d0d0" stroke-width="1.2"/></svg>
<svg style="left:1030px;top:625px" width="11" height="13" viewBox="0 0 11 13"><path d="M0.5 2.5h10M3.5 2.5V0.7h4v1.8M1.5 2.5l0.5 10h7l0.5-10M4 4.5v6M5.5 4.5v6M7 4.5v6" fill="none" stroke="#747474" stroke-width="1"/></svg>
<div class="a" style="left:828px;top:641px;width:241px;height:1px;background:#3d3d3d"></div>
<div class="a" style="left:828px;top:642px;width:241px;height:8px;background:#4a4a4a;border-bottom:1px solid #3a3a3a"></div>
<div class="grip" style="left:939px;top:644px;width:20px;height:4px"></div>

<!-- panel left border --><div class="a" style="left:828px;top:285px;width:1px;height:365px;background:#3d3d3d"></div>

<!-- ===== DIALOG ===== -->
<div class="a" style="left:736px;top:405px;width:327px;height:196px;background:#535353;box-shadow:1px 2px 6px rgba(0,0,0,.5)"></div>
<div class="a" style="left:736px;top:405px;width:327px;height:31px;background:#fff"></div>
<div class="t" style="left:742.4px;top:415px;font-size:12px;color:#0a0a1e;letter-spacing:0.02px;">Pathfinder Options</div>
<div class="t" style="left:750.0px;top:463px;font-size:12px;color:#c6c6c6;letter-spacing:-0.28px;">Precision:</div>
<div class="a" style="left:804px;top:458px;width:72px;height:21px;background:#fff;border:1px solid #3d85e8;border-radius:3px"></div>
<div class="a" style="left:809px;top:461px;width:55px;height:14px;background:#0a64d6"></div>
<div class="t" style="left:809.7px;top:463px;font-size:12px;color:#fff;letter-spacing:0.49px;">0.0283 pt</div>
<div class="a" style="left:864px;top:461px;width:1px;height:14px;background:#d86a00"></div>
<div class="a" style="left:750px;top:490px;width:12px;height:12px;border:1px solid #e0e0e0;border-radius:1px"></div>
<div class="t" style="left:767.0px;top:491px;font-size:12px;color:#f0f0f0;letter-spacing:-0.21px;">Remove Redundant Points</div>
<div class="a" style="left:750px;top:515px;width:12px;height:12px;border:1px solid #e0e0e0;border-radius:1px"></div>
<div class="t" style="left:767.0px;top:516px;font-size:12px;color:#f0f0f0;letter-spacing:-0.03px;">Divide and Outline Will Remove Unpainted Artwork</div>
<div class="a" style="left:749px;top:551px;width:93px;height:26px;border:1px solid #f0f0f0;border-radius:13px"></div>
<div class="t" style="left:749px;top:558px;width:93px;text-align:center;font-size:12px;color:#f4f4f4;letter-spacing:-0.1px">Defaults</div>
<div class="a" style="left:861px;top:551px;width:92px;height:26px;border:2px solid #f4f4f4;border-radius:13px"></div>
<div class="t" style="left:861px;top:558px;width:92px;text-align:center;font-size:12px;color:#f4f4f4">OK</div>
<div class="a" style="left:958px;top:551px;width:93px;height:26px;border:1px solid #f0f0f0;border-radius:13px"></div>
<div class="t" style="left:958px;top:558px;width:93px;text-align:center;font-size:12px;color:#f4f4f4;letter-spacing:-0.1px">Cancel</div>


<!-- ===== ANNOTATIONS ===== -->
<!-- red rectangles -->
<div class="a" style="left:827px;top:316px;width:242px;height:81px;border:5px solid #fe0000;border-right-width:6px;border-radius:4px"></div>
<div class="a" style="left:731px;top:399px;width:337px;height:207px;border:6px solid #fe0000;border-left-width:5px;border-top-width:5px;border-radius:5px"></div>
<div class="a" style="left:1107px;top:519px;width:248px;height:87px;border:6px solid #fe0000;border-radius:6px"></div>
<!-- arrow -->
<svg class="a" style="left:650px;top:335px" width="175" height="32" viewBox="0 0 175 32"><defs><linearGradient id="ag" x1="0" x2="0" y1="0" y2="1"><stop offset="0" stop-color="#e81418"/><stop offset="1" stop-color="#b80a10"/></linearGradient><filter id="ash" x="-5%" y="-30%" width="110%" height="170%"><feDropShadow dx="0.5" dy="1" stdDeviation="0.8" flood-color="#000" flood-opacity="0.35"/></filter></defs><g filter="url(#ash)"><path d="M4 14.3L163 13.3L165 17.3L160 21.5L4 16.3Z" fill="url(#ag)"/><path d="M153.5 10.5L165 17.3L153.5 24.3" fill="none" stroke="#d01014" stroke-width="3.6" stroke-linejoin="round" stroke-linecap="round"/></g></svg>


</body></html>
